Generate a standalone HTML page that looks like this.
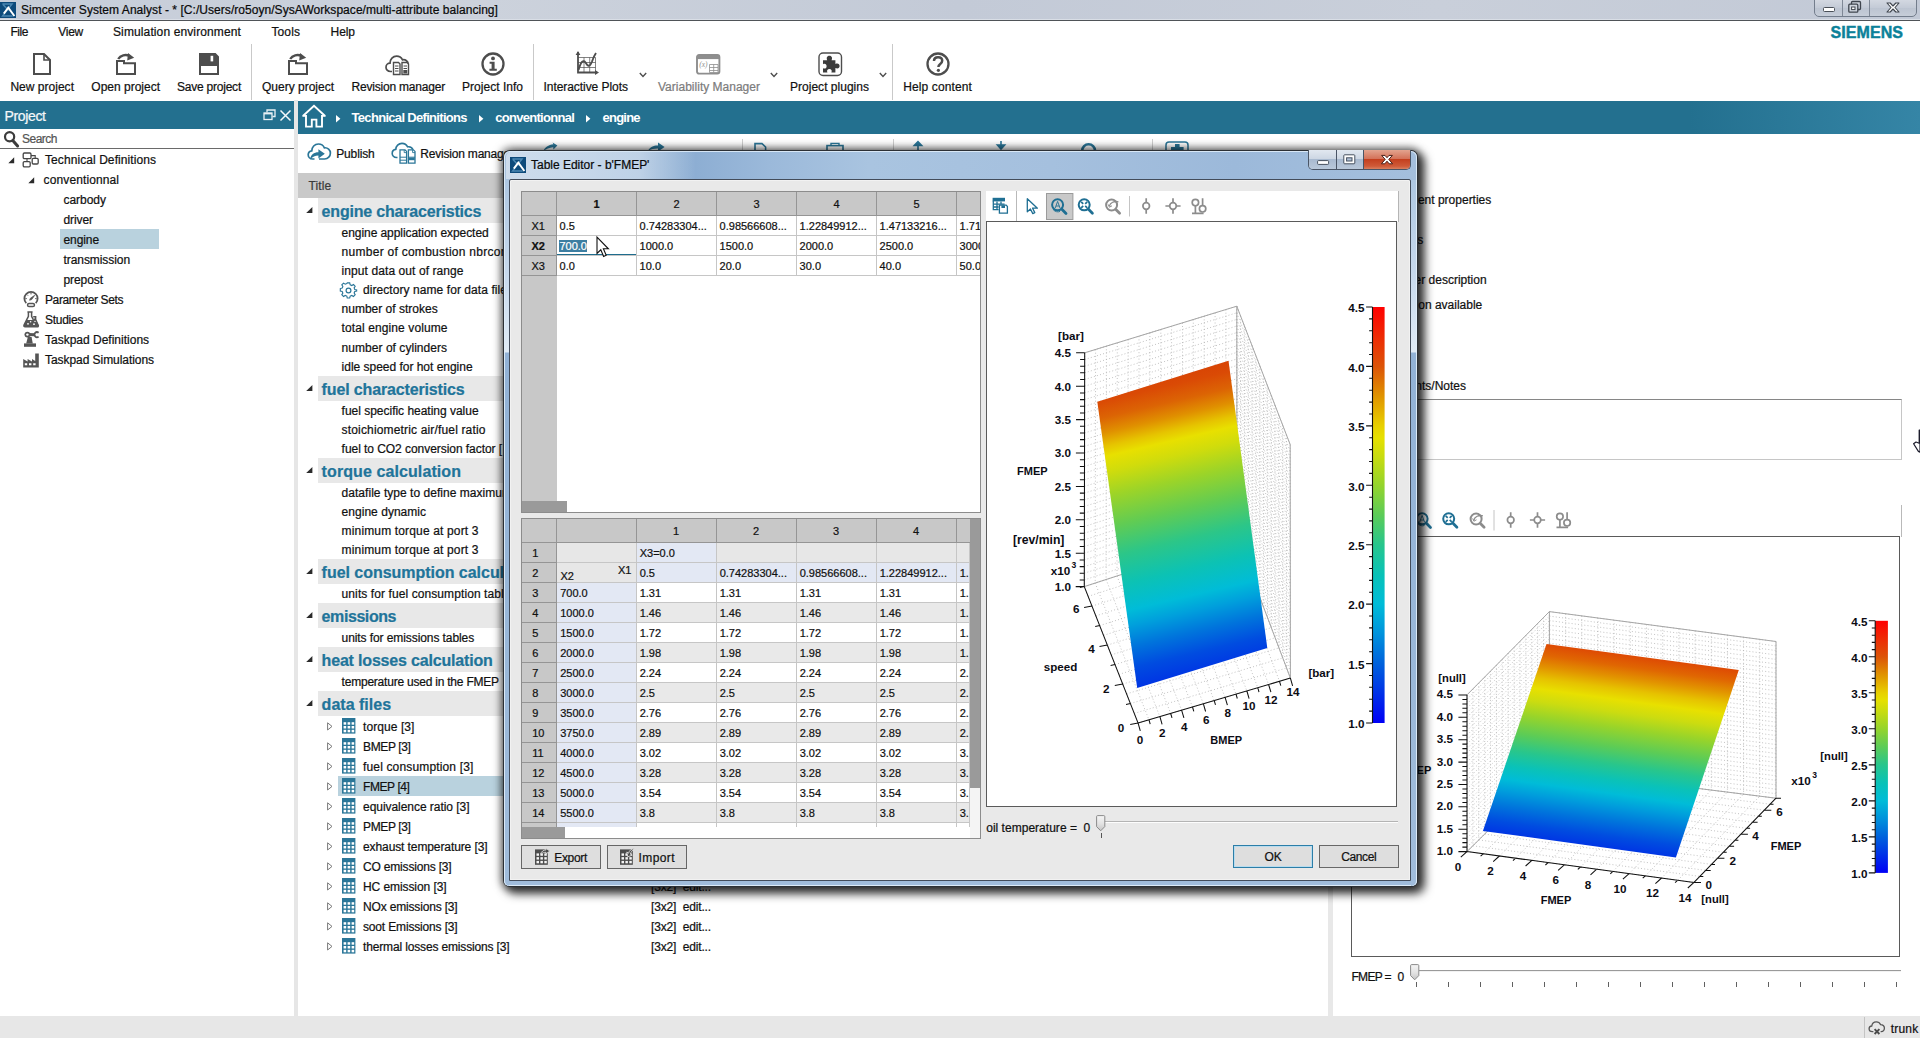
<!DOCTYPE html>
<html><head><meta charset="utf-8"><title>Simcenter System Analyst</title>
<style>
html,body{margin:0;padding:0;}
body{width:1920px;height:1038px;overflow:hidden;position:relative;background:#fff;font-family:"Liberation Sans",sans-serif;font-size:12px;color:#111;}
div{position:absolute;box-sizing:border-box;}
.t{position:absolute;white-space:pre;-webkit-text-stroke:0.22px;}
svg{position:absolute;overflow:visible;}
table{border-collapse:collapse;}
</style></head>
<body>
<div style="left:0px;top:0px;width:1920px;height:20px;background:linear-gradient(90deg,#c6cdd9 0%,#ccd2dc 25%,#c3cad7 50%,#c9cfda 75%,#c2c9d6 100%);"></div>
<div style="left:0px;top:19px;width:1920px;height:1px;background:#d9dee6;"></div>
<div style="left:0px;top:20px;width:1920px;height:1px;background:#4f5358;"></div>
<svg style="left:0px;top:2px;" width="16" height="16" viewBox="0 0 16 16"><rect x="0" y="0" width="16" height="16" fill="#0d4a7b"/><path d="M2.4 1.9H12L2.6 13.9H12.6M3 2.4L8.6 8.4" fill="none" stroke="#4a86b2" stroke-width="1.5"/><path d="M3.8 11.6L8.3 5.6L14.4 14" fill="none" stroke="#fff" stroke-width="1.9"/></svg>
<span class="t" style="top:2.32px;font-size:12px;line-height:17px;color:#0a0a0a;letter-spacing:0.048px;left:21px;">Simcenter System Analyst - * [C:/Users/ro5oyn/SysAWorkspace/multi-attribute balancing]</span>
<div style="left:1814px;top:-1px;width:103px;height:18px;border:1px solid #737d8c;border-radius:0 0 5px 5px;background:linear-gradient(#d3d8e1,#c3cad6 50%,#bcc4d1 51%,#c6cdd8);"></div>
<div style="left:1842px;top:0px;width:1px;height:16px;background:#7f8896;"></div>
<div style="left:1869px;top:0px;width:1px;height:16px;background:#7f8896;"></div>
<svg style="left:1823px;top:7px;" width="13" height="6" viewBox="0 0 13 6"><rect x="0.5" y="0.5" width="11" height="4" rx="1" fill="#fff" stroke="#4a5058" stroke-width="1"/></svg>
<svg style="left:1848px;top:1px;" width="14" height="13" viewBox="0 0 14 13"><rect x="3.5" y="0.5" width="9" height="8" rx="1" fill="none" stroke="#3f454e" stroke-width="1.3"/><rect x="0.8" y="3.2" width="9" height="8" rx="1" fill="#cfd5de" stroke="#3f454e" stroke-width="1.3"/><rect x="3.6" y="6" width="3.4" height="2.6" fill="#fff" stroke="#3f454e" stroke-width="1"/></svg>
<svg style="left:1886px;top:2px;" width="14" height="11" viewBox="0 0 14 11"><path d="M1 1H4.2L7 4L9.8 1H13L9 5.5L13 10H9.8L7 7L4.2 10H1L5 5.5Z" fill="#fff" stroke="#3f454e" stroke-width="1.1" stroke-linejoin="round"/></svg>
<div style="left:0px;top:21px;width:1920px;height:79px;background:#fff;"></div>
<span class="t" style="top:24.12px;font-size:12px;line-height:17px;color:#111;letter-spacing:-0.436px;left:10.4px;">File</span>
<span class="t" style="top:24.12px;font-size:12px;line-height:17px;color:#111;letter-spacing:-0.274px;left:58.3px;">View</span>
<span class="t" style="top:24.12px;font-size:12px;line-height:17px;color:#111;letter-spacing:0.118px;left:113px;">Simulation environment</span>
<span class="t" style="top:24.12px;font-size:12px;line-height:17px;color:#111;letter-spacing:0.097px;left:271.5px;">Tools</span>
<span class="t" style="top:24.12px;font-size:12px;line-height:17px;color:#111;letter-spacing:-0.122px;left:330.6px;">Help</span>
<span class="t" style="top:21.80px;font-size:16px;line-height:22px;color:#0b8199;font-weight:bold;letter-spacing:0.055px;left:1830.6px;-webkit-text-stroke:0.45px #0b8199;">SIEMENS</span>
<span class="t" style="top:78.92px;font-size:12px;line-height:17px;color:#111;letter-spacing:0.022px;left:10.4px;">New project</span>
<span class="t" style="top:78.92px;font-size:12px;line-height:17px;color:#111;left:91.3px;">Open project</span>
<span class="t" style="top:78.92px;font-size:12px;line-height:17px;color:#111;letter-spacing:-0.225px;left:177px;">Save project</span>
<span class="t" style="top:78.92px;font-size:12px;line-height:17px;color:#111;left:262px;">Query project</span>
<span class="t" style="top:78.92px;font-size:12px;line-height:17px;color:#111;letter-spacing:-0.201px;left:351.5px;">Revision manager</span>
<span class="t" style="top:78.92px;font-size:12px;line-height:17px;color:#111;letter-spacing:0.025px;left:462px;">Project Info</span>
<span class="t" style="top:78.92px;font-size:12px;line-height:17px;color:#111;letter-spacing:-0.057px;left:543.5px;">Interactive Plots</span>
<span class="t" style="top:78.92px;font-size:12px;line-height:17px;color:#7c7c7c;letter-spacing:0.009px;left:658px;">Variability Manager</span>
<span class="t" style="top:78.92px;font-size:12px;line-height:17px;color:#111;letter-spacing:0.019px;left:790px;">Project plugins</span>
<span class="t" style="top:78.92px;font-size:12px;line-height:17px;color:#111;letter-spacing:0.117px;left:903.2px;">Help content</span>
<div style="left:251px;top:44px;width:1px;height:56px;background:#c9c9c9;"></div>
<div style="left:533px;top:44px;width:1px;height:56px;background:#c9c9c9;"></div>
<div style="left:892px;top:44px;width:1px;height:56px;background:#c9c9c9;"></div>
<svg style="left:638.5px;top:71.5px;" width="8" height="6" viewBox="0 0 8 6"><path d="M0.8 1L4 4.4L7.2 1" fill="none" stroke="#4d4d4d" stroke-width="1.4"/></svg>
<svg style="left:770px;top:71.5px;" width="8" height="6" viewBox="0 0 8 6"><path d="M0.8 1L4 4.4L7.2 1" fill="none" stroke="#4d4d4d" stroke-width="1.4"/></svg>
<svg style="left:879px;top:71.5px;" width="8" height="6" viewBox="0 0 8 6"><path d="M0.8 1L4 4.4L7.2 1" fill="none" stroke="#4d4d4d" stroke-width="1.4"/></svg>
<svg style="left:33px;top:53px;" width="18" height="22" viewBox="0 0 18 22"><path d="M1 1H11L17 7V21H1Z" fill="none" stroke="#4d4d4d" stroke-width="2" stroke-linejoin="miter"/><path d="M11 1V7H17" fill="none" stroke="#4d4d4d" stroke-width="1.6"/></svg>
<svg style="left:116px;top:53px;" width="20" height="22" viewBox="0 0 20 22"><path d="M1 8H8V10.2H19V21H1Z" fill="none" stroke="#4d4d4d" stroke-width="2" stroke-linejoin="miter"/><path d="M2.2 6C4.5 2.2 9.5 1 13.6 3" fill="none" stroke="#4d4d4d" stroke-width="2.4"/><path d="M12 0L18.2 4.8L11.2 7.4Z" fill="#4d4d4d"/></svg>
<svg style="left:288px;top:53px;" width="20" height="22" viewBox="0 0 20 22"><path d="M1 8H8V10.2H19V21H1Z" fill="none" stroke="#4d4d4d" stroke-width="2" stroke-linejoin="miter"/><path d="M2.2 6C4.5 2.2 9.5 1 13.6 3" fill="none" stroke="#4d4d4d" stroke-width="2.4"/><path d="M12 0L18.2 4.8L11.2 7.4Z" fill="#4d4d4d"/></svg>
<svg style="left:199px;top:53px;" width="21" height="22" viewBox="0 0 21 22"><path d="M1 1H16.2L19 3.8V21H1Z" fill="#fff" stroke="#4d4d4d" stroke-width="2" stroke-linejoin="miter"/><path d="M1 1H16.2L19 3.8V13H1Z" fill="#4d4d4d"/><rect x="11.6" y="2.8" width="2.6" height="5.6" fill="#fff"/></svg>
<svg style="left:385px;top:53px;" width="26" height="23" viewBox="0 0 26 23"><path d="M7 18.5H5.5C2.5 18.5 1 16.3 1 14.2C1 11.8 2.8 10.2 5 10.2C5 6 8 3.2 11.6 3.2C14.3 3.2 16.4 4.6 17.5 6.8C20.5 6.3 23.2 8.3 23.2 11.2" fill="none" stroke="#4d4d4d" stroke-width="1.7"/><path d="M8.5 9.5H13.5L15 11V21.5H8.5Z" fill="#fff" stroke="#4d4d4d" stroke-width="1.4"/><path d="M17 9.5H22L23.5 11V21.5H17Z" fill="#fff" stroke="#4d4d4d" stroke-width="1.4"/><path d="M10 13H13.5M10 15.5H13.5M10 18H13.5M18.5 13H22M18.5 15.5H22" stroke="#4d4d4d" stroke-width="1"/><rect x="18.3" y="17" width="4" height="3.5" fill="#4d4d4d"/></svg>
<svg style="left:481px;top:52px;" width="24" height="24" viewBox="0 0 24 24"><circle cx="12" cy="12" r="10.5" fill="none" stroke="#4d4d4d" stroke-width="2.3"/><circle cx="12" cy="6.4" r="1.9" fill="#4d4d4d"/><path d="M8.6 9.8H13.6V16.8H15.8V18.8H8.4V16.8H10.6V11.8H8.6Z" fill="#4d4d4d"/></svg>
<svg style="left:574px;top:51px;" width="26" height="25" viewBox="0 0 26 25"><path d="M4 1V21.5H23" fill="none" stroke="#4d4d4d" stroke-width="1.8"/><path d="M4 0L1.6 4H6.4ZM25 21.5L21 19.1V23.9Z" fill="#4d4d4d"/><path d="M4 6.5H21.5V21.5M4 11.5H21.5M4 16.5H21.5M10 6.5V21.5M15.7 6.5V21.5" fill="none" stroke="#4d4d4d" stroke-width="0.7"/><path d="M4.5 19C7 10 9.5 8.5 11.5 11.5C13.5 15 15.5 17 18 10.5C19.2 7 20.6 4 22 2" fill="none" stroke="#4d4d4d" stroke-width="1.9"/></svg>
<svg style="left:696.4px;top:54px;" width="26" height="22" viewBox="0 0 26 22"><rect x="1" y="1" width="22.4" height="18.6" rx="2" fill="none" stroke="#8e8e8e" stroke-width="1.9"/><path d="M1 3.4H23.4" stroke="#8e8e8e" stroke-width="3.4"/><path d="M13.5 10.5H22M13.5 13.5H22M13.5 16.5H22M13.5 10.5V18.5M17.7 10.5V18.5M22 10.5V18.5M13.5 18.5H22" stroke="#8e8e8e" stroke-width="0.8" fill="none"/><text x="3.2" y="12.5" font-family="Liberation Serif" font-style="italic" font-size="7.5" fill="#8e8e8e">(x)</text></svg>
<svg style="left:818px;top:52px;" width="25" height="25" viewBox="0 0 25 25"><rect x="1" y="1" width="22.5" height="22.5" rx="4" fill="#fff" stroke="#4d4d4d" stroke-width="1.4"/><path d="M5 8.2H9.2C8 5.6 9.4 3.8 11.4 3.8C13.4 3.8 14.8 5.6 13.6 8.2H17.4V12C20 10.8 21.6 12.2 21.6 14C21.6 15.8 20 17.2 17.4 16V20.6H13.4C14.4 18.4 13.2 17 11.4 17C9.6 17 8.4 18.4 9.4 20.6H5V16.2C7.2 17.2 8.6 16 8.6 14.2C8.6 12.4 7.2 11.2 5 12.2Z" fill="#3c3c3c"/></svg>
<svg style="left:926px;top:52px;" width="24" height="24" viewBox="0 0 24 24"><circle cx="12" cy="12" r="10.5" fill="none" stroke="#4d4d4d" stroke-width="2.3"/><path d="M8 9C8 6.6 9.7 5.2 12.1 5.2C14.5 5.2 16.2 6.6 16.2 8.7C16.2 10.4 15.2 11.3 14 12.2C13 13 12.4 13.5 12.4 15" fill="none" stroke="#4d4d4d" stroke-width="2.5"/><circle cx="12.4" cy="18.3" r="1.6" fill="#4d4d4d"/></svg>
<div style="left:0px;top:100.7px;width:1920px;height:28.1px;background:linear-gradient(90deg,#23708f 0%,#23708f 88%,#3585a6 100%);"></div>
<div style="left:298px;top:129px;width:1622px;height:5px;background:linear-gradient(90deg,#23708f 0%,#23708f 86%,#3585a6 100%);"></div>
<span class="t" style="top:106.41px;font-size:14px;line-height:20px;color:#f4f8fa;letter-spacing:-0.368px;left:4.6px;">Project</span>
<svg style="left:263px;top:109px;" width="13" height="12" viewBox="0 0 13 12"><path d="M4 3.5V1H12V7.5H9.5" fill="none" stroke="#e8f0f4" stroke-width="1.3"/><rect x="1" y="4" width="8" height="6.5" fill="none" stroke="#e8f0f4" stroke-width="1.3"/><path d="M1 4.6H9" stroke="#e8f0f4" stroke-width="1.6"/></svg>
<svg style="left:279px;top:109px;" width="13" height="13" viewBox="0 0 13 13"><path d="M1.5 1.5L11.5 11.5M11.5 1.5L1.5 11.5" stroke="#f4f8fa" stroke-width="1.5"/></svg>
<svg style="left:301px;top:104px;" width="28" height="26" viewBox="0 0 28 26"><path d="M2.2 11.8L13 1.9L23.8 11.8" fill="none" stroke="#fff" stroke-width="1.9" stroke-linejoin="miter"/><path d="M1.4 11.9H5V22.6H10.8V15.6H15.4V22.6H21V11.9H24.6" fill="none" stroke="#fff" stroke-width="1.9" stroke-linejoin="miter"/></svg>
<svg style="left:335.8px;top:114.6px;" width="5" height="8" viewBox="0 0 5 8"><path d="M0 0L4.4 3.7L0 7.4Z" fill="#fff"/></svg>
<svg style="left:478.6px;top:114.6px;" width="5" height="8" viewBox="0 0 5 8"><path d="M0 0L4.4 3.7L0 7.4Z" fill="#fff"/></svg>
<svg style="left:585.8px;top:114.6px;" width="5" height="8" viewBox="0 0 5 8"><path d="M0 0L4.4 3.7L0 7.4Z" fill="#fff"/></svg>
<span class="t" style="top:109.42px;font-size:13px;line-height:18px;color:#fff;font-weight:bold;letter-spacing:-0.685px;left:351.5px;-webkit-text-stroke:0;">Technical Definitions</span>
<span class="t" style="top:109.42px;font-size:13px;line-height:18px;color:#fff;font-weight:bold;letter-spacing:-0.702px;left:495.2px;-webkit-text-stroke:0;">conventionnal</span>
<span class="t" style="top:109.42px;font-size:13px;line-height:18px;color:#fff;font-weight:bold;letter-spacing:-0.768px;left:602.5px;-webkit-text-stroke:0;">engine</span>
<div style="left:0px;top:1016px;width:1920px;height:22px;background:#e7e7e7;"></div>
<div style="left:1864px;top:1017px;width:1px;height:21px;background:#c4c4c4;"></div>
<svg style="left:1868.4px;top:1020.6px;" width="18" height="15" viewBox="0 0 18 15"><path d="M5.4 10.6H4.4C2.5 10.6 1.1 9.3 1.1 7.7C1.1 6.2 2.3 5.1 3.8 5C4 2.7 5.9 0.9 8.3 0.9C10.2 0.9 11.8 2 12.5 3.6C14.7 3.5 16.4 5.1 16.4 7.1C16.4 9 15 10.6 13.1 10.6H12.6" fill="none" stroke="#555" stroke-width="1.3"/><path d="M6.6 8.2L11.4 13M11.4 8.2L6.6 13" stroke="#4a4a4a" stroke-width="1.9"/></svg>
<span class="t" style="top:1021.02px;font-size:12px;line-height:17px;color:#111;letter-spacing:0.183px;left:1890.8px;">trunk</span>
<div style="left:294px;top:100px;width:4px;height:916px;background:#e6e6e6;"></div>
<div style="left:1328px;top:173px;width:5px;height:843px;background:#e8e8e8;"></div>
<svg style="left:3px;top:130px;" width="17" height="18" viewBox="0 0 17 18"><circle cx="6.6" cy="6.8" r="4.6" fill="none" stroke="#3c3c3c" stroke-width="2.2"/><path d="M9.8 10.4L14.6 16" stroke="#3c3c3c" stroke-width="3" stroke-linecap="round"/></svg>
<span class="t" style="top:131.12px;font-size:12px;line-height:17px;color:#555;letter-spacing:-0.505px;left:22px;">Search</span>
<div style="left:0px;top:148px;width:294px;height:1px;background:#6a6a6a;"></div>
<div style="left:60px;top:229px;width:99px;height:20px;background:#b9d2de;"></div>
<span class="t" style="top:152.02px;font-size:12px;line-height:17px;color:#111;letter-spacing:0.077px;left:45px;">Technical Definitions</span>
<span class="t" style="top:172.02px;font-size:12px;line-height:17px;color:#111;letter-spacing:0.111px;left:43.6px;">conventionnal</span>
<span class="t" style="top:192.02px;font-size:12px;line-height:17px;color:#111;letter-spacing:-0.029px;left:63.5px;">carbody</span>
<span class="t" style="top:212.02px;font-size:12px;line-height:17px;color:#111;letter-spacing:-0.086px;left:63.5px;">driver</span>
<span class="t" style="top:232.02px;font-size:12px;line-height:17px;color:#111;letter-spacing:-0.091px;left:63.5px;">engine</span>
<span class="t" style="top:252.02px;font-size:12px;line-height:17px;color:#111;letter-spacing:-0.072px;left:63.5px;">transmission</span>
<span class="t" style="top:272.02px;font-size:12px;line-height:17px;color:#111;letter-spacing:-0.076px;left:63.5px;">prepost</span>
<span class="t" style="top:292.02px;font-size:12px;line-height:17px;color:#111;letter-spacing:-0.384px;left:45px;">Parameter Sets</span>
<span class="t" style="top:312.02px;font-size:12px;line-height:17px;color:#111;letter-spacing:-0.290px;left:45px;">Studies</span>
<span class="t" style="top:332.02px;font-size:12px;line-height:17px;color:#111;left:45px;">Taskpad Definitions</span>
<span class="t" style="top:352.02px;font-size:12px;line-height:17px;color:#111;letter-spacing:-0.056px;left:45px;">Taskpad Simulations</span>
<svg style="left:8px;top:156.5px;" width="7" height="7" viewBox="0 0 7 7"><path d="M6.2 0.3V6.2H0.3Z" fill="#2b2b2b"/></svg>
<svg style="left:28px;top:176.5px;" width="7" height="7" viewBox="0 0 7 7"><path d="M6.2 0.3V6.2H0.3Z" fill="#2b2b2b"/></svg>
<svg style="left:22px;top:151.6px;" width="17" height="16" viewBox="0 0 17 16"><rect x="1.2" y="1" width="7.8" height="5.6" rx="1.2" fill="#fff" stroke="#454545" stroke-width="1.3"/><rect x="10.2" y="6.4" width="6" height="5.6" rx="1.2" fill="#fff" stroke="#454545" stroke-width="1.3"/><rect x="1.2" y="9.6" width="7" height="5.2" rx="1.2" fill="#fff" stroke="#454545" stroke-width="1.3"/><path d="M5 6.6V9.6M9 3.6H13.2V6.4" fill="none" stroke="#454545" stroke-width="1.1"/></svg>
<svg style="left:23px;top:290.6px;" width="16" height="17" viewBox="0 0 16 17"><path d="M3.3 12.2A6.6 6.6 0 1 1 12.7 12.2" fill="none" stroke="#555" stroke-width="1.8"/><path d="M6.6 9.2L7.4 7.2L11.6 4.4L8.6 8.6Z" fill="#555" stroke="#555" stroke-width="0.8" stroke-linejoin="round"/><path d="M8 1.8V3.4M2.4 7.6H3.8M12.2 7.6H13.6M4 3.6L5 4.6" stroke="#555" stroke-width="1"/><rect x="4.6" y="12.4" width="6.8" height="3.2" rx="1.4" fill="#fff" stroke="#555" stroke-width="1.5"/></svg>
<svg style="left:23px;top:310.6px;" width="16" height="17" viewBox="0 0 16 17"><path d="M4.4 0.9H9.6M5.4 0.9V5.4L1 14.2C0.6 15.1 1.2 15.8 2 15.8H14.2C15.2 15.8 15.6 15 15.2 14.2L12.6 8.6V5.8M10.2 5.8H13.4M8.6 0.9V5.4L10.4 9" fill="none" stroke="#555" stroke-width="1.5" stroke-linejoin="round"/><path d="M3.6 9H10.6V7.6H12.6L15.4 14.6L14.6 15.8H1.6L0.8 14.6Z" fill="#555"/><circle cx="5" cy="12.8" r="0.9" fill="#fff"/><circle cx="7.6" cy="10.8" r="0.8" fill="#fff"/><circle cx="11" cy="13.2" r="0.9" fill="#fff"/><circle cx="12" cy="10.4" r="0.7" fill="#fff"/></svg>
<svg style="left:23px;top:331px;" width="17" height="17" viewBox="0 0 17 17"><rect x="1" y="12.4" width="12" height="3.4" fill="#555"/><path d="M3.2 12.6L5 5.2L8.6 6L9.8 12.6Z" fill="#555"/><path d="M5 3.4L11.4 3.8" stroke="#555" stroke-width="3"/><circle cx="4.4" cy="3.6" r="2.9" fill="#555"/><circle cx="4.4" cy="3.6" r="1.2" fill="#fff"/><path d="M15.6 1.8A2.5 2.5 0 1 0 15.6 5.6" fill="none" stroke="#555" stroke-width="1.8"/></svg>
<svg style="left:23px;top:352.6px;" width="17" height="15" viewBox="0 0 17 15"><path d="M0.2 14.4V6L4.6 8.6V6L9 8.6V6L12.2 8V0.4H15.8V14.4Z" fill="#555"/><path d="M1.8 11.3H4.2M6 11.3H8.4M10.2 11.3H12.6" stroke="#fff" stroke-width="1.9"/></svg>
<svg style="left:307px;top:142px;" width="26" height="21" viewBox="0 0 26 21"><path d="M7.5 17H5.6C3 17 1.2 15 1.2 12.8C1.2 10.6 2.8 9 4.8 8.8C4.8 5 7.6 2 11.4 2C14.2 2 16.4 3.6 17.4 5.8C20.6 5.4 23.4 7.8 23.4 11C23.4 14.2 21 17 17.6 17H12" fill="none" stroke="#2a7698" stroke-width="1.7"/><path d="M3.2 17.5C3.6 12.6 7 10.2 11.4 10.2V7.2L17.8 11.8L11.4 16.4V13.4C8.2 13.4 5.4 14.4 3.2 17.5Z" fill="#2a7698"/></svg>
<span class="t" style="top:145.52px;font-size:12px;line-height:17px;color:#111;letter-spacing:-0.137px;left:336.2px;">Publish</span>
<svg style="left:391px;top:142px;" width="26" height="23" viewBox="0 0 26 23"><path d="M6.5 15.5H5.5C2.8 15.5 1.2 13.4 1.2 11.4C1.2 9.2 2.8 7.6 4.8 7.4C4.8 4 7.6 1.4 11 1.4C13.6 1.4 15.6 2.8 16.6 4.8C19 4.4 21.2 5.6 22 7.8" fill="none" stroke="#2a7698" stroke-width="1.6"/><path d="M9 7.8H14L15.6 9.4V21.2H9Z" fill="#fff" stroke="#2a7698" stroke-width="1.3"/><path d="M17.4 7.8H22.4L24 9.4V21.2H17.4Z" fill="#fff" stroke="#2a7698" stroke-width="1.3"/><path d="M9 15.2H15.6M9 18.2H15.6M17.4 15.2H24" stroke="#2a7698" stroke-width="1"/><rect x="17.6" y="15.6" width="6.2" height="2.6" fill="#2a7698"/><path d="M13.2 8V10.6H15.6M21.6 8V10.6H24" stroke="#2a7698" stroke-width="0.9" fill="none"/></svg>
<span class="t" style="top:145.52px;font-size:12px;line-height:17px;color:#111;letter-spacing:-0.201px;left:420.3px;">Revision manager</span>
<svg style="left:540px;top:142px;" width="18" height="10" viewBox="0 0 18 10"><path d="M3 9.6C4.6 5.4 8.6 2.6 13.4 2.2L12.6 0.4L17.4 3.4L13.4 7.4L13.2 5.2C9.4 5.4 6 6.8 3 9.6Z" fill="#2a7698"/></svg>
<svg style="left:645px;top:142px;" width="22" height="10" viewBox="0 0 22 10"><path d="M3 9C5 5 9 3.4 13 3.6V0.6L19.6 5L13 9.4V6.6C9 6.6 6 7.4 3 9Z" fill="#2a7698"/></svg>
<svg style="left:754px;top:142px;" width="16" height="10" viewBox="0 0 16 10"><path d="M1 12V1.6H8L11.6 5V12" fill="none" stroke="#2a7698" stroke-width="1.6"/></svg>
<svg style="left:826px;top:142px;" width="18" height="10" viewBox="0 0 18 10"><rect x="1" y="3.6" width="16" height="8" fill="none" stroke="#2a7698" stroke-width="1.6"/><path d="M5 3.6V1.4H13V3.6" fill="none" stroke="#2a7698" stroke-width="1.4"/></svg>
<svg style="left:912px;top:140px;" width="12" height="10" viewBox="0 0 12 10"><path d="M6 10V3M2.4 5.4L6 1.6L9.6 5.4Z" stroke="#2a7698" stroke-width="1.6" fill="#2a7698"/></svg>
<svg style="left:995px;top:140px;" width="12" height="10" viewBox="0 0 12 10"><path d="M6 1V7M2.4 5L6 9L9.6 5Z" stroke="#2a7698" stroke-width="1.6" fill="#2a7698"/></svg>
<svg style="left:1079px;top:142px;" width="20" height="10" viewBox="0 0 20 10"><circle cx="9.6" cy="8.6" r="6.4" fill="none" stroke="#2a7698" stroke-width="2.6"/></svg>
<svg style="left:1165px;top:141px;" width="26" height="10" viewBox="0 0 26 10"><rect x="1" y="1" width="22" height="14" rx="3" fill="none" stroke="#2a7698" stroke-width="1.5"/><rect x="10" y="3" width="4.6" height="3" fill="#2a7698"/><rect x="6" y="6" width="12.6" height="4" fill="#2a7698"/></svg>
<div style="left:742px;top:139px;width:1px;height:14px;background:#cfcfcf;"></div>
<div style="left:893px;top:139px;width:1px;height:14px;background:#cfcfcf;"></div>
<div style="left:1152px;top:139px;width:1px;height:14px;background:#cfcfcf;"></div>
<div style="left:298px;top:173px;width:1030px;height:25px;background:#c9c9c9;"></div>
<span class="t" style="top:177.92px;font-size:12px;line-height:17px;color:#3a3a3a;letter-spacing:0.113px;left:308.6px;">Title</span>
<div style="left:318px;top:198px;width:1010px;height:24.7px;background:#e8e8e8;"></div>
<svg style="left:306px;top:207px;" width="7" height="7" viewBox="0 0 7 7"><path d="M6.4 0V6.1H0.2Z" fill="#2b2b2b"/></svg>
<span class="t" style="top:200.90px;font-size:16px;line-height:22px;color:#21749a;font-weight:bold;letter-spacing:-0.192px;left:321.6px;">engine characeristics</span>
<span class="t" style="top:224.64px;font-size:12px;line-height:17px;color:#111;letter-spacing:-0.066px;left:341.6px;">engine application expected</span>
<span class="t" style="top:243.79px;font-size:12px;line-height:17px;color:#111;letter-spacing:0.27px;left:341.6px;">number of combustion nbrcomb</span>
<span class="t" style="top:262.94px;font-size:12px;line-height:17px;color:#111;letter-spacing:0.083px;left:341.6px;">input data out of range</span>
<svg style="left:340px;top:281.85px;" width="18" height="18" viewBox="0 0 18 18"><g fill="none" stroke="#2a7698" stroke-width="1.2"><circle cx="8.5" cy="8.5" r="2.4"/><path d="M7.2 1.2H9.8L10.3 3.2L12 4L13.8 2.9L15.6 4.7L14.5 6.5L15.2 8.2L17.2 8.7V9.8L15.2 10.4L14.5 12L15.6 13.8L13.8 15.6L12 14.5L10.3 15.2L9.8 17.2H7.2L6.7 15.2L5 14.5L3.2 15.6L1.4 13.8L2.5 12L1.8 10.3L-0.2 9.8V7.2L1.8 6.7L2.5 5L1.4 3.2L3.2 1.4L5 2.5L6.7 1.8Z" transform="translate(0.5,-0.2) scale(0.94)"/></g></svg>
<span class="t" style="top:282.09px;font-size:12px;line-height:17px;color:#111;letter-spacing:0.07px;left:363px;">directory name for data files</span>
<span class="t" style="top:301.24px;font-size:12px;line-height:17px;color:#111;left:341.6px;">number of strokes</span>
<span class="t" style="top:320.39px;font-size:12px;line-height:17px;color:#111;letter-spacing:0.101px;left:341.6px;">total engine volume</span>
<span class="t" style="top:339.54px;font-size:12px;line-height:17px;color:#111;letter-spacing:0.041px;left:341.6px;">number of cylinders</span>
<span class="t" style="top:358.69px;font-size:12px;line-height:17px;color:#111;letter-spacing:-0.018px;left:341.6px;">idle speed for hot engine</span>
<div style="left:318px;top:376.2px;width:1010px;height:24.7px;background:#e8e8e8;"></div>
<svg style="left:306px;top:385.2px;" width="7" height="7" viewBox="0 0 7 7"><path d="M6.4 0V6.1H0.2Z" fill="#2b2b2b"/></svg>
<span class="t" style="top:379.10px;font-size:16px;line-height:22px;color:#21749a;font-weight:bold;letter-spacing:-0.143px;left:321.6px;">fuel characteristics</span>
<span class="t" style="top:402.84px;font-size:12px;line-height:17px;color:#111;letter-spacing:-0.016px;left:341.6px;">fuel specific heating value</span>
<span class="t" style="top:421.99px;font-size:12px;line-height:17px;color:#111;letter-spacing:0.159px;left:341.6px;">stoichiometric air/fuel ratio</span>
<span class="t" style="top:441.14px;font-size:12px;line-height:17px;color:#111;letter-spacing:-0.05px;left:341.6px;">fuel to CO2 conversion factor [</span>
<div style="left:318px;top:458.3px;width:1010px;height:24.7px;background:#e8e8e8;"></div>
<svg style="left:306px;top:467.3px;" width="7" height="7" viewBox="0 0 7 7"><path d="M6.4 0V6.1H0.2Z" fill="#2b2b2b"/></svg>
<span class="t" style="top:461.20px;font-size:16px;line-height:22px;color:#21749a;font-weight:bold;letter-spacing:0.095px;left:321.6px;">torque calculation</span>
<span class="t" style="top:484.94px;font-size:12px;line-height:17px;color:#111;letter-spacing:0.03px;left:341.6px;">datafile type to define maximum</span>
<span class="t" style="top:504.09px;font-size:12px;line-height:17px;color:#111;letter-spacing:0.031px;left:341.6px;">engine dynamic</span>
<span class="t" style="top:523.24px;font-size:12px;line-height:17px;color:#111;letter-spacing:0.150px;left:341.6px;">minimum torque at port 3</span>
<span class="t" style="top:542.39px;font-size:12px;line-height:17px;color:#111;letter-spacing:0.150px;left:341.6px;">minimum torque at port 3</span>
<div style="left:318px;top:559.3px;width:1010px;height:24.7px;background:#e8e8e8;"></div>
<svg style="left:306px;top:568.3px;" width="7" height="7" viewBox="0 0 7 7"><path d="M6.4 0V6.1H0.2Z" fill="#2b2b2b"/></svg>
<span class="t" style="top:562.20px;font-size:16px;line-height:22px;color:#21749a;font-weight:bold;letter-spacing:-0.03px;left:321.6px;">fuel consumption calculation</span>
<span class="t" style="top:585.94px;font-size:12px;line-height:17px;color:#111;letter-spacing:0.09px;left:341.6px;">units for fuel consumption tables</span>
<div style="left:318px;top:603px;width:1010px;height:24.7px;background:#e8e8e8;"></div>
<svg style="left:306px;top:612px;" width="7" height="7" viewBox="0 0 7 7"><path d="M6.4 0V6.1H0.2Z" fill="#2b2b2b"/></svg>
<span class="t" style="top:605.90px;font-size:16px;line-height:22px;color:#21749a;font-weight:bold;letter-spacing:-0.418px;left:321.6px;">emissions</span>
<span class="t" style="top:629.64px;font-size:12px;line-height:17px;color:#111;letter-spacing:-0.086px;left:341.6px;">units for emissions tables</span>
<div style="left:318px;top:646.9px;width:1010px;height:24.7px;background:#e8e8e8;"></div>
<svg style="left:306px;top:655.9px;" width="7" height="7" viewBox="0 0 7 7"><path d="M6.4 0V6.1H0.2Z" fill="#2b2b2b"/></svg>
<span class="t" style="top:649.80px;font-size:16px;line-height:22px;color:#21749a;font-weight:bold;letter-spacing:-0.182px;left:321.6px;">heat losses calculation</span>
<span class="t" style="top:673.54px;font-size:12px;line-height:17px;color:#111;letter-spacing:-0.22px;left:341.6px;">temperature used in the FMEP</span>
<div style="left:318px;top:691.2px;width:1010px;height:24.7px;background:#e8e8e8;"></div>
<svg style="left:306px;top:700.2px;" width="7" height="7" viewBox="0 0 7 7"><path d="M6.4 0V6.1H0.2Z" fill="#2b2b2b"/></svg>
<span class="t" style="top:694.10px;font-size:16px;line-height:22px;color:#21749a;font-weight:bold;letter-spacing:0.014px;left:321.6px;">data files</span>
<div style="left:338px;top:776px;width:990px;height:20px;background:#b9d2de;"></div>
<svg style="left:326.6px;top:722.4px;" width="6" height="9" viewBox="0 0 6 9"><path d="M0.6 0.8L5 4.4L0.6 8Z" fill="#fff" stroke="#7a7a7a" stroke-width="1"/></svg>
<svg style="left:342px;top:718.2px;" width="14" height="16" viewBox="0 0 14 16"><rect x="0" y="0" width="13.4" height="15.6" fill="#2a7698"/><rect x="1.6" y="4.2" width="2.6" height="2.5" fill="#fff"/><rect x="5.6" y="4.2" width="2.6" height="2.5" fill="#fff"/><rect x="9.6" y="4.2" width="2.6" height="2.5" fill="#fff"/><rect x="1.6" y="8.0" width="2.6" height="2.5" fill="#fff"/><rect x="5.6" y="8.0" width="2.6" height="2.5" fill="#fff"/><rect x="9.6" y="8.0" width="2.6" height="2.5" fill="#fff"/><rect x="1.6" y="11.8" width="2.6" height="2.5" fill="#fff"/><rect x="5.6" y="11.8" width="2.6" height="2.5" fill="#fff"/><rect x="9.6" y="11.8" width="2.6" height="2.5" fill="#fff"/></svg>
<span class="t" style="top:718.94px;font-size:12px;line-height:17px;color:#111;letter-spacing:0.080px;left:363px;">torque [3]</span>
<span class="t" style="top:718.94px;font-size:12px;line-height:17px;color:#111;letter-spacing:-0.146px;left:651px;">[3x2]  edit...</span>
<svg style="left:326.6px;top:742.4px;" width="6" height="9" viewBox="0 0 6 9"><path d="M0.6 0.8L5 4.4L0.6 8Z" fill="#fff" stroke="#7a7a7a" stroke-width="1"/></svg>
<svg style="left:342px;top:738.2px;" width="14" height="16" viewBox="0 0 14 16"><rect x="0" y="0" width="13.4" height="15.6" fill="#2a7698"/><rect x="1.6" y="4.2" width="2.6" height="2.5" fill="#fff"/><rect x="5.6" y="4.2" width="2.6" height="2.5" fill="#fff"/><rect x="9.6" y="4.2" width="2.6" height="2.5" fill="#fff"/><rect x="1.6" y="8.0" width="2.6" height="2.5" fill="#fff"/><rect x="5.6" y="8.0" width="2.6" height="2.5" fill="#fff"/><rect x="9.6" y="8.0" width="2.6" height="2.5" fill="#fff"/><rect x="1.6" y="11.8" width="2.6" height="2.5" fill="#fff"/><rect x="5.6" y="11.8" width="2.6" height="2.5" fill="#fff"/><rect x="9.6" y="11.8" width="2.6" height="2.5" fill="#fff"/></svg>
<span class="t" style="top:738.94px;font-size:12px;line-height:17px;color:#111;letter-spacing:-0.371px;left:363px;">BMEP [3]</span>
<span class="t" style="top:738.94px;font-size:12px;line-height:17px;color:#111;letter-spacing:-0.146px;left:651px;">[3x2]  edit...</span>
<svg style="left:326.6px;top:762.4px;" width="6" height="9" viewBox="0 0 6 9"><path d="M0.6 0.8L5 4.4L0.6 8Z" fill="#fff" stroke="#7a7a7a" stroke-width="1"/></svg>
<svg style="left:342px;top:758.2px;" width="14" height="16" viewBox="0 0 14 16"><rect x="0" y="0" width="13.4" height="15.6" fill="#2a7698"/><rect x="1.6" y="4.2" width="2.6" height="2.5" fill="#fff"/><rect x="5.6" y="4.2" width="2.6" height="2.5" fill="#fff"/><rect x="9.6" y="4.2" width="2.6" height="2.5" fill="#fff"/><rect x="1.6" y="8.0" width="2.6" height="2.5" fill="#fff"/><rect x="5.6" y="8.0" width="2.6" height="2.5" fill="#fff"/><rect x="9.6" y="8.0" width="2.6" height="2.5" fill="#fff"/><rect x="1.6" y="11.8" width="2.6" height="2.5" fill="#fff"/><rect x="5.6" y="11.8" width="2.6" height="2.5" fill="#fff"/><rect x="9.6" y="11.8" width="2.6" height="2.5" fill="#fff"/></svg>
<span class="t" style="top:758.94px;font-size:12px;line-height:17px;color:#111;letter-spacing:0.155px;left:363px;">fuel consumption [3]</span>
<span class="t" style="top:758.94px;font-size:12px;line-height:17px;color:#111;letter-spacing:-0.146px;left:651px;">[3x2]  edit...</span>
<svg style="left:326.6px;top:782.4px;" width="6" height="9" viewBox="0 0 6 9"><path d="M0.6 0.8L5 4.4L0.6 8Z" fill="#fff" stroke="#7a7a7a" stroke-width="1"/></svg>
<svg style="left:342px;top:778.2px;" width="14" height="16" viewBox="0 0 14 16"><rect x="0" y="0" width="13.4" height="15.6" fill="#2a7698"/><rect x="1.6" y="4.2" width="2.6" height="2.5" fill="#fff"/><rect x="5.6" y="4.2" width="2.6" height="2.5" fill="#fff"/><rect x="9.6" y="4.2" width="2.6" height="2.5" fill="#fff"/><rect x="1.6" y="8.0" width="2.6" height="2.5" fill="#fff"/><rect x="5.6" y="8.0" width="2.6" height="2.5" fill="#fff"/><rect x="9.6" y="8.0" width="2.6" height="2.5" fill="#fff"/><rect x="1.6" y="11.8" width="2.6" height="2.5" fill="#fff"/><rect x="5.6" y="11.8" width="2.6" height="2.5" fill="#fff"/><rect x="9.6" y="11.8" width="2.6" height="2.5" fill="#fff"/></svg>
<span class="t" style="top:778.94px;font-size:12px;line-height:17px;color:#111;letter-spacing:-0.412px;left:363px;">FMEP [4]</span>
<span class="t" style="top:778.94px;font-size:12px;line-height:17px;color:#111;letter-spacing:-0.146px;left:651px;">[3x2]  edit...</span>
<svg style="left:326.6px;top:802.4px;" width="6" height="9" viewBox="0 0 6 9"><path d="M0.6 0.8L5 4.4L0.6 8Z" fill="#fff" stroke="#7a7a7a" stroke-width="1"/></svg>
<svg style="left:342px;top:798.2px;" width="14" height="16" viewBox="0 0 14 16"><rect x="0" y="0" width="13.4" height="15.6" fill="#2a7698"/><rect x="1.6" y="4.2" width="2.6" height="2.5" fill="#fff"/><rect x="5.6" y="4.2" width="2.6" height="2.5" fill="#fff"/><rect x="9.6" y="4.2" width="2.6" height="2.5" fill="#fff"/><rect x="1.6" y="8.0" width="2.6" height="2.5" fill="#fff"/><rect x="5.6" y="8.0" width="2.6" height="2.5" fill="#fff"/><rect x="9.6" y="8.0" width="2.6" height="2.5" fill="#fff"/><rect x="1.6" y="11.8" width="2.6" height="2.5" fill="#fff"/><rect x="5.6" y="11.8" width="2.6" height="2.5" fill="#fff"/><rect x="9.6" y="11.8" width="2.6" height="2.5" fill="#fff"/></svg>
<span class="t" style="top:798.94px;font-size:12px;line-height:17px;color:#111;letter-spacing:-0.043px;left:363px;">equivalence ratio [3]</span>
<span class="t" style="top:798.94px;font-size:12px;line-height:17px;color:#111;letter-spacing:-0.146px;left:651px;">[3x2]  edit...</span>
<svg style="left:326.6px;top:822.4px;" width="6" height="9" viewBox="0 0 6 9"><path d="M0.6 0.8L5 4.4L0.6 8Z" fill="#fff" stroke="#7a7a7a" stroke-width="1"/></svg>
<svg style="left:342px;top:818.2px;" width="14" height="16" viewBox="0 0 14 16"><rect x="0" y="0" width="13.4" height="15.6" fill="#2a7698"/><rect x="1.6" y="4.2" width="2.6" height="2.5" fill="#fff"/><rect x="5.6" y="4.2" width="2.6" height="2.5" fill="#fff"/><rect x="9.6" y="4.2" width="2.6" height="2.5" fill="#fff"/><rect x="1.6" y="8.0" width="2.6" height="2.5" fill="#fff"/><rect x="5.6" y="8.0" width="2.6" height="2.5" fill="#fff"/><rect x="9.6" y="8.0" width="2.6" height="2.5" fill="#fff"/><rect x="1.6" y="11.8" width="2.6" height="2.5" fill="#fff"/><rect x="5.6" y="11.8" width="2.6" height="2.5" fill="#fff"/><rect x="9.6" y="11.8" width="2.6" height="2.5" fill="#fff"/></svg>
<span class="t" style="top:818.94px;font-size:12px;line-height:17px;color:#111;letter-spacing:-0.371px;left:363px;">PMEP [3]</span>
<span class="t" style="top:818.94px;font-size:12px;line-height:17px;color:#111;letter-spacing:-0.146px;left:651px;">[3x2]  edit...</span>
<svg style="left:326.6px;top:842.4px;" width="6" height="9" viewBox="0 0 6 9"><path d="M0.6 0.8L5 4.4L0.6 8Z" fill="#fff" stroke="#7a7a7a" stroke-width="1"/></svg>
<svg style="left:342px;top:838.2px;" width="14" height="16" viewBox="0 0 14 16"><rect x="0" y="0" width="13.4" height="15.6" fill="#2a7698"/><rect x="1.6" y="4.2" width="2.6" height="2.5" fill="#fff"/><rect x="5.6" y="4.2" width="2.6" height="2.5" fill="#fff"/><rect x="9.6" y="4.2" width="2.6" height="2.5" fill="#fff"/><rect x="1.6" y="8.0" width="2.6" height="2.5" fill="#fff"/><rect x="5.6" y="8.0" width="2.6" height="2.5" fill="#fff"/><rect x="9.6" y="8.0" width="2.6" height="2.5" fill="#fff"/><rect x="1.6" y="11.8" width="2.6" height="2.5" fill="#fff"/><rect x="5.6" y="11.8" width="2.6" height="2.5" fill="#fff"/><rect x="9.6" y="11.8" width="2.6" height="2.5" fill="#fff"/></svg>
<span class="t" style="top:838.94px;font-size:12px;line-height:17px;color:#111;letter-spacing:-0.098px;left:363px;">exhaust temperature [3]</span>
<span class="t" style="top:838.94px;font-size:12px;line-height:17px;color:#111;letter-spacing:-0.146px;left:651px;">[3x2]  edit...</span>
<svg style="left:326.6px;top:862.4px;" width="6" height="9" viewBox="0 0 6 9"><path d="M0.6 0.8L5 4.4L0.6 8Z" fill="#fff" stroke="#7a7a7a" stroke-width="1"/></svg>
<svg style="left:342px;top:858.2px;" width="14" height="16" viewBox="0 0 14 16"><rect x="0" y="0" width="13.4" height="15.6" fill="#2a7698"/><rect x="1.6" y="4.2" width="2.6" height="2.5" fill="#fff"/><rect x="5.6" y="4.2" width="2.6" height="2.5" fill="#fff"/><rect x="9.6" y="4.2" width="2.6" height="2.5" fill="#fff"/><rect x="1.6" y="8.0" width="2.6" height="2.5" fill="#fff"/><rect x="5.6" y="8.0" width="2.6" height="2.5" fill="#fff"/><rect x="9.6" y="8.0" width="2.6" height="2.5" fill="#fff"/><rect x="1.6" y="11.8" width="2.6" height="2.5" fill="#fff"/><rect x="5.6" y="11.8" width="2.6" height="2.5" fill="#fff"/><rect x="9.6" y="11.8" width="2.6" height="2.5" fill="#fff"/></svg>
<span class="t" style="top:858.94px;font-size:12px;line-height:17px;color:#111;letter-spacing:-0.179px;left:363px;">CO emissions [3]</span>
<span class="t" style="top:858.94px;font-size:12px;line-height:17px;color:#111;letter-spacing:-0.146px;left:651px;">[3x2]  edit...</span>
<svg style="left:326.6px;top:882.4px;" width="6" height="9" viewBox="0 0 6 9"><path d="M0.6 0.8L5 4.4L0.6 8Z" fill="#fff" stroke="#7a7a7a" stroke-width="1"/></svg>
<svg style="left:342px;top:878.2px;" width="14" height="16" viewBox="0 0 14 16"><rect x="0" y="0" width="13.4" height="15.6" fill="#2a7698"/><rect x="1.6" y="4.2" width="2.6" height="2.5" fill="#fff"/><rect x="5.6" y="4.2" width="2.6" height="2.5" fill="#fff"/><rect x="9.6" y="4.2" width="2.6" height="2.5" fill="#fff"/><rect x="1.6" y="8.0" width="2.6" height="2.5" fill="#fff"/><rect x="5.6" y="8.0" width="2.6" height="2.5" fill="#fff"/><rect x="9.6" y="8.0" width="2.6" height="2.5" fill="#fff"/><rect x="1.6" y="11.8" width="2.6" height="2.5" fill="#fff"/><rect x="5.6" y="11.8" width="2.6" height="2.5" fill="#fff"/><rect x="9.6" y="11.8" width="2.6" height="2.5" fill="#fff"/></svg>
<span class="t" style="top:878.94px;font-size:12px;line-height:17px;color:#111;letter-spacing:-0.080px;left:363px;">HC emission [3]</span>
<span class="t" style="top:878.94px;font-size:12px;line-height:17px;color:#111;letter-spacing:-0.146px;left:651px;">[3x2]  edit...</span>
<svg style="left:326.6px;top:902.4px;" width="6" height="9" viewBox="0 0 6 9"><path d="M0.6 0.8L5 4.4L0.6 8Z" fill="#fff" stroke="#7a7a7a" stroke-width="1"/></svg>
<svg style="left:342px;top:898.2px;" width="14" height="16" viewBox="0 0 14 16"><rect x="0" y="0" width="13.4" height="15.6" fill="#2a7698"/><rect x="1.6" y="4.2" width="2.6" height="2.5" fill="#fff"/><rect x="5.6" y="4.2" width="2.6" height="2.5" fill="#fff"/><rect x="9.6" y="4.2" width="2.6" height="2.5" fill="#fff"/><rect x="1.6" y="8.0" width="2.6" height="2.5" fill="#fff"/><rect x="5.6" y="8.0" width="2.6" height="2.5" fill="#fff"/><rect x="9.6" y="8.0" width="2.6" height="2.5" fill="#fff"/><rect x="1.6" y="11.8" width="2.6" height="2.5" fill="#fff"/><rect x="5.6" y="11.8" width="2.6" height="2.5" fill="#fff"/><rect x="9.6" y="11.8" width="2.6" height="2.5" fill="#fff"/></svg>
<span class="t" style="top:898.94px;font-size:12px;line-height:17px;color:#111;letter-spacing:-0.168px;left:363px;">NOx emissions [3]</span>
<span class="t" style="top:898.94px;font-size:12px;line-height:17px;color:#111;letter-spacing:-0.146px;left:651px;">[3x2]  edit...</span>
<svg style="left:326.6px;top:922.4px;" width="6" height="9" viewBox="0 0 6 9"><path d="M0.6 0.8L5 4.4L0.6 8Z" fill="#fff" stroke="#7a7a7a" stroke-width="1"/></svg>
<svg style="left:342px;top:918.2px;" width="14" height="16" viewBox="0 0 14 16"><rect x="0" y="0" width="13.4" height="15.6" fill="#2a7698"/><rect x="1.6" y="4.2" width="2.6" height="2.5" fill="#fff"/><rect x="5.6" y="4.2" width="2.6" height="2.5" fill="#fff"/><rect x="9.6" y="4.2" width="2.6" height="2.5" fill="#fff"/><rect x="1.6" y="8.0" width="2.6" height="2.5" fill="#fff"/><rect x="5.6" y="8.0" width="2.6" height="2.5" fill="#fff"/><rect x="9.6" y="8.0" width="2.6" height="2.5" fill="#fff"/><rect x="1.6" y="11.8" width="2.6" height="2.5" fill="#fff"/><rect x="5.6" y="11.8" width="2.6" height="2.5" fill="#fff"/><rect x="9.6" y="11.8" width="2.6" height="2.5" fill="#fff"/></svg>
<span class="t" style="top:918.94px;font-size:12px;line-height:17px;color:#111;letter-spacing:-0.160px;left:363px;">soot Emissions [3]</span>
<span class="t" style="top:918.94px;font-size:12px;line-height:17px;color:#111;letter-spacing:-0.146px;left:651px;">[3x2]  edit...</span>
<svg style="left:326.6px;top:942.4px;" width="6" height="9" viewBox="0 0 6 9"><path d="M0.6 0.8L5 4.4L0.6 8Z" fill="#fff" stroke="#7a7a7a" stroke-width="1"/></svg>
<svg style="left:342px;top:938.2px;" width="14" height="16" viewBox="0 0 14 16"><rect x="0" y="0" width="13.4" height="15.6" fill="#2a7698"/><rect x="1.6" y="4.2" width="2.6" height="2.5" fill="#fff"/><rect x="5.6" y="4.2" width="2.6" height="2.5" fill="#fff"/><rect x="9.6" y="4.2" width="2.6" height="2.5" fill="#fff"/><rect x="1.6" y="8.0" width="2.6" height="2.5" fill="#fff"/><rect x="5.6" y="8.0" width="2.6" height="2.5" fill="#fff"/><rect x="9.6" y="8.0" width="2.6" height="2.5" fill="#fff"/><rect x="1.6" y="11.8" width="2.6" height="2.5" fill="#fff"/><rect x="5.6" y="11.8" width="2.6" height="2.5" fill="#fff"/><rect x="9.6" y="11.8" width="2.6" height="2.5" fill="#fff"/></svg>
<span class="t" style="top:938.94px;font-size:12px;line-height:17px;color:#111;letter-spacing:-0.151px;left:363px;">thermal losses emissions [3]</span>
<span class="t" style="top:938.94px;font-size:12px;line-height:17px;color:#111;letter-spacing:-0.146px;left:651px;">[3x2]  edit...</span>
<span class="t" style="top:191.82px;font-size:12px;line-height:17px;color:#111;left:1091.3px;width:400px;text-align:right;">Component properties</span>
<span class="t" style="top:231.52px;font-size:12px;line-height:17px;color:#111;left:1023.2px;width:400px;text-align:right;">Attributes</span>
<span class="t" style="top:272.12px;font-size:12px;line-height:17px;color:#111;left:1086.6px;width:400px;text-align:right;">Parameter description</span>
<span class="t" style="top:296.62px;font-size:12px;line-height:17px;color:#111;left:1082.3px;width:400px;text-align:right;">No description available</span>
<span class="t" style="top:377.52px;font-size:12px;line-height:17px;color:#111;left:1066px;width:400px;text-align:right;">Comments/Notes</span>
<div style="left:1351px;top:399px;width:550.6px;height:60.6px;border:1px solid #c6c6c6;border-top-color:#868686;background:#fff;"></div>
<div style="left:1351px;top:505px;width:551px;height:32px;background:#fff;border-right:1px solid #b9b9b9;"></div>
<div style="left:1351px;top:536.4px;width:549px;height:420.2px;background:#fff;border:1px solid #5a5a5a;"></div>
<svg style="left:0;top:0" width="1920" height="1038" viewBox="0 0 1920 1038"><defs><linearGradient id="rs" gradientUnits="userSpaceOnUse" x1="1546.5" y1="644.0" x2="1520.4" y2="836.0"><stop offset="0.000" stop-color="#de4a04"/><stop offset="0.060" stop-color="#e06602"/><stop offset="0.120" stop-color="#e29200"/><stop offset="0.180" stop-color="#e6c200"/><stop offset="0.235" stop-color="#e8e000"/><stop offset="0.300" stop-color="#ccdc10"/><stop offset="0.380" stop-color="#98d42a"/><stop offset="0.480" stop-color="#5ccc56"/><stop offset="0.570" stop-color="#28c68c"/><stop offset="0.650" stop-color="#0ac2b8"/><stop offset="0.720" stop-color="#00bcd8"/><stop offset="0.780" stop-color="#009edc"/><stop offset="0.860" stop-color="#0074dc"/><stop offset="0.940" stop-color="#004ce0"/><stop offset="1.000" stop-color="#0036e4"/></linearGradient><linearGradient id="rc" gradientUnits="userSpaceOnUse" x1="1875.2" y1="620.8" x2="1875.2" y2="872.9"><stop offset="0.000" stop-color="#ff0000"/><stop offset="0.070" stop-color="#ee2a04"/><stop offset="0.143" stop-color="#dc5408"/><stop offset="0.215" stop-color="#e09400"/><stop offset="0.286" stop-color="#e8d000"/><stop offset="0.315" stop-color="#e6e000"/><stop offset="0.360" stop-color="#c8dc10"/><stop offset="0.429" stop-color="#94d42c"/><stop offset="0.500" stop-color="#5ccc58"/><stop offset="0.571" stop-color="#28c68c"/><stop offset="0.645" stop-color="#08c2b8"/><stop offset="0.714" stop-color="#00bcd8"/><stop offset="0.786" stop-color="#0092dc"/><stop offset="0.857" stop-color="#0062dc"/><stop offset="0.930" stop-color="#0030e8"/><stop offset="1.000" stop-color="#0000f6"/></linearGradient></defs><g transform="translate(364.5,314)"><g fill="none" stroke="#1f6f93"><circle cx="1057.6" cy="204.8" r="5.5" stroke-width="2"/><path d="M1061.9 209.3L1066 213.4" stroke-width="2.8" stroke-linecap="round"/><path d="M1055.2 208L1057.6 201.4L1060 208M1056 206H1059.2" stroke-width="0.9"/><path d="M1053.2 209.6C1055 211.8 1058 212.4 1060 211.4" stroke-width="0.9"/></g><g fill="none" stroke="#1f6f93"><circle cx="1084.2" cy="204.8" r="5.5" stroke-width="2"/><path d="M1088.5 209.3L1092.4 213.2" stroke-width="2.8" stroke-linecap="round"/><path d="M1081.2 201.8L1083.2 203.8M1087.2 201.8L1085.2 203.8M1081.2 207.8L1083.2 205.8M1087.2 207.8L1085.2 205.8" stroke-width="1.7"/></g><g fill="none" stroke="#8c8c8c"><circle cx="1111.6" cy="205" r="5.5" stroke-width="2"/><path d="M1115.9 209.5L1119.6 213.2" stroke-width="2.8" stroke-linecap="round"/><path d="M1109.4 206.2C1110 202.6 1114.4 200.8 1118.4 201.8" stroke-width="1.3"/><path d="M1108.2 204.4L1109.4 207.2L1112 205.8" stroke-width="1"/></g><path d="M1129.5 196V216.5" stroke="#c4c4c4" stroke-width="1"/><g fill="none" stroke="#8c8c8c" stroke-width="1.7"><circle cx="1146.2" cy="206" r="3.3"/><path d="M1146.2 198.2V202.6M1146.2 209.4V213.8"/><circle cx="1173" cy="206" r="3.3"/><path d="M1173 198.2V202.6M1173 209.4V213.8M1165.4 206H1169.6M1176.4 206H1180.6"/><circle cx="1195.4" cy="202.6" r="3.2"/><circle cx="1202.6" cy="208.8" r="3.2"/><path d="M1195.4 205.8V213.4M1202.6 198.2V205.6M1192 213.4H1203.6"/></g></g><path d="M1467.0 694.9L1549.4 611.6M1549.4 611.6L1776.0 641.5M1467.0 699.4L1549.4 616.1M1549.4 616.1L1776.0 646.0M1467.0 703.9L1549.4 620.6M1549.4 620.6L1776.0 650.5M1467.0 708.3L1549.4 625.2M1549.4 625.2L1776.0 654.9M1467.0 712.8L1549.4 629.7M1549.4 629.7L1776.0 659.4M1467.0 717.3L1549.4 634.2M1549.4 634.2L1776.0 663.9M1467.0 721.8L1549.4 638.7M1549.4 638.7L1776.0 668.4M1467.0 726.2L1549.4 643.2M1549.4 643.2L1776.0 672.8M1467.0 730.7L1549.4 647.8M1549.4 647.8L1776.0 677.3M1467.0 735.2L1549.4 652.3M1549.4 652.3L1776.0 681.8M1467.0 739.7L1549.4 656.8M1549.4 656.8L1776.0 686.3M1467.0 744.1L1549.4 661.3M1549.4 661.3L1776.0 690.7M1467.0 748.6L1549.4 665.8M1549.4 665.8L1776.0 695.2M1467.0 753.1L1549.4 670.4M1549.4 670.4L1776.0 699.7M1467.0 757.6L1549.4 674.9M1549.4 674.9L1776.0 704.2M1467.0 762.1L1549.4 679.4M1549.4 679.4L1776.0 708.7M1467.0 766.5L1549.4 683.9M1549.4 683.9L1776.0 713.1M1467.0 771.0L1549.4 688.4M1549.4 688.4L1776.0 717.6M1467.0 775.5L1549.4 693.0M1549.4 693.0L1776.0 722.1M1467.0 780.0L1549.4 697.5M1549.4 697.5L1776.0 726.6M1467.0 784.4L1549.4 702.0M1549.4 702.0L1776.0 731.0M1467.0 788.9L1549.4 706.5M1549.4 706.5L1776.0 735.5M1467.0 793.4L1549.4 711.0M1549.4 711.0L1776.0 740.0M1467.0 797.9L1549.4 715.6M1549.4 715.6L1776.0 744.5M1467.0 802.4L1549.4 720.1M1549.4 720.1L1776.0 749.0M1467.0 806.8L1549.4 724.6M1549.4 724.6L1776.0 753.4M1467.0 811.3L1549.4 729.1M1549.4 729.1L1776.0 757.9M1467.0 815.8L1549.4 733.6M1549.4 733.6L1776.0 762.4M1467.0 820.3L1549.4 738.2M1549.4 738.2L1776.0 766.9M1467.0 824.7L1549.4 742.7M1549.4 742.7L1776.0 771.3M1467.0 829.2L1549.4 747.2M1549.4 747.2L1776.0 775.8M1467.0 833.7L1549.4 751.7M1549.4 751.7L1776.0 780.3M1467.0 838.2L1549.4 756.2M1549.4 756.2L1776.0 784.8M1467.0 842.6L1549.4 760.8M1549.4 760.8L1776.0 789.2M1467.0 847.1L1549.4 765.3M1549.4 765.3L1776.0 793.7M1467.0 851.6L1549.4 769.8M1549.4 769.8L1776.0 798.2M1467.0 694.9L1467.0 851.6M1549.4 611.6L1549.4 769.8M1472.9 688.9L1472.9 845.8M1565.6 613.7L1565.6 771.8M1478.8 683.0L1478.8 839.9M1581.8 615.9L1581.8 773.9M1484.7 677.0L1484.7 834.1M1598.0 618.0L1598.0 775.9M1490.5 671.1L1490.5 828.2M1614.1 620.1L1614.1 777.9M1496.4 665.1L1496.4 822.4M1630.3 622.3L1630.3 779.9M1502.3 659.2L1502.3 816.5M1646.5 624.4L1646.5 782.0M1508.2 653.2L1508.2 810.7M1662.7 626.5L1662.7 784.0M1514.1 647.3L1514.1 804.9M1678.9 628.7L1678.9 786.0M1520.0 641.4L1520.0 799.0M1695.1 630.8L1695.1 788.1M1525.9 635.4L1525.9 793.2M1711.3 633.0L1711.3 790.1M1531.7 629.5L1531.7 787.3M1727.4 635.1L1727.4 792.1M1537.6 623.5L1537.6 781.5M1743.6 637.2L1743.6 794.1M1543.5 617.5L1543.5 775.6M1759.8 639.4L1759.8 796.2M1549.4 611.6L1549.4 769.8M1776.0 641.5L1776.0 798.2M1467.0 851.6L1549.4 769.8M1467.0 851.6L1694.0 882.4M1483.2 853.8L1565.6 771.8M1472.9 845.8L1699.9 876.4M1499.4 856.0L1581.8 773.9M1478.8 839.9L1705.7 870.4M1515.6 858.2L1598.0 775.9M1484.7 834.1L1711.6 864.4M1531.9 860.4L1614.1 777.9M1490.5 828.2L1717.4 858.3M1548.1 862.6L1630.3 779.9M1496.4 822.4L1723.3 852.3M1564.3 864.8L1646.5 782.0M1502.3 816.5L1729.1 846.3M1580.5 867.0L1662.7 784.0M1508.2 810.7L1735.0 840.3M1596.7 869.2L1678.9 786.0M1514.1 804.9L1740.9 834.3M1612.9 871.4L1695.1 788.1M1520.0 799.0L1746.7 828.3M1629.1 873.6L1711.3 790.1M1525.9 793.2L1752.6 822.3M1645.4 875.8L1727.4 792.1M1531.7 787.3L1758.4 816.2M1661.6 878.0L1743.6 794.1M1537.6 781.5L1764.3 810.2M1677.8 880.2L1759.8 796.2M1543.5 775.6L1770.1 804.2M1694.0 882.4L1776.0 798.2M1549.4 769.8L1776.0 798.2" fill="none" stroke="#b4b4b4" stroke-width="0.8" stroke-dasharray="1 2.2"/><path d="M1467.0 694.9L1549.4 611.6M1549.4 611.6L1776.0 641.5M1776.0 641.5L1776.0 798.2M1549.4 611.6L1549.4 769.8M1467.0 851.6L1549.4 769.8M1549.4 769.8L1776.0 798.2" fill="none" stroke="#a6a6a6" stroke-width="1"/><path d="M1546.5 644.0L1738.8 670.1L1675.9 857.6L1482.9 830.9Z" fill="url(#rs)"/><path d="M1467.0 694.9L1467.0 851.6M1467.0 851.6L1694.0 882.4M1694.0 882.4L1776.0 798.2M1467.0 694.9h-8.6M1467.0 699.4h-4.6M1467.0 703.9h-4.6M1467.0 708.3h-4.6M1467.0 712.8h-4.6M1467.0 717.3h-8.6M1467.0 721.8h-4.6M1467.0 726.2h-4.6M1467.0 730.7h-4.6M1467.0 735.2h-4.6M1467.0 739.7h-8.6M1467.0 744.1h-4.6M1467.0 748.6h-4.6M1467.0 753.1h-4.6M1467.0 757.6h-4.6M1467.0 762.1h-8.6M1467.0 766.5h-4.6M1467.0 771.0h-4.6M1467.0 775.5h-4.6M1467.0 780.0h-4.6M1467.0 784.4h-8.6M1467.0 788.9h-4.6M1467.0 793.4h-4.6M1467.0 797.9h-4.6M1467.0 802.4h-4.6M1467.0 806.8h-8.6M1467.0 811.3h-4.6M1467.0 815.8h-4.6M1467.0 820.3h-4.6M1467.0 824.7h-4.6M1467.0 829.2h-8.6M1467.0 833.7h-4.6M1467.0 838.2h-4.6M1467.0 842.6h-4.6M1467.0 847.1h-4.6M1467.0 851.6h-8.6M1467.0 851.6L1460.8 857.2M1483.2 853.8L1480.6 856.2M1499.4 856.0L1493.2 861.6M1515.6 858.2L1513.0 860.6M1531.9 860.4L1525.6 866.0M1548.1 862.6L1545.4 865.0M1564.3 864.8L1558.1 870.4M1580.5 867.0L1577.8 869.4M1596.7 869.2L1590.5 874.8M1612.9 871.4L1610.3 873.8M1629.1 873.6L1622.9 879.2M1645.4 875.8L1642.7 878.2M1661.6 878.0L1655.4 883.6M1677.8 880.2L1675.1 882.6M1694.0 882.4L1687.8 888.0M1694.0 882.4L1701.0 882.4M1699.9 876.4L1703.3 876.4M1705.7 870.4L1710.7 870.4M1711.6 864.4L1715.0 864.4M1717.4 858.3L1724.4 858.3M1723.3 852.3L1726.7 852.3M1729.1 846.3L1734.1 846.3M1735.0 840.3L1738.4 840.3M1740.9 834.3L1747.9 834.3M1746.7 828.3L1750.1 828.3M1752.6 822.3L1757.6 822.3M1758.4 816.2L1761.8 816.2M1764.3 810.2L1771.3 810.2M1770.1 804.2L1773.5 804.2M1776.0 798.2L1781.0 798.2" fill="none" stroke="#111" stroke-width="1.05"/><text x="1453" y="698.4" text-anchor="end" font-family='"Liberation Sans",sans-serif' font-weight="bold" font-size="11.7" fill="#0c0c14">4.5</text><text x="1453" y="720.8" text-anchor="end" font-family='"Liberation Sans",sans-serif' font-weight="bold" font-size="11.7" fill="#0c0c14">4.0</text><text x="1453" y="743.2" text-anchor="end" font-family='"Liberation Sans",sans-serif' font-weight="bold" font-size="11.7" fill="#0c0c14">3.5</text><text x="1453" y="765.6" text-anchor="end" font-family='"Liberation Sans",sans-serif' font-weight="bold" font-size="11.7" fill="#0c0c14">3.0</text><text x="1453" y="787.9" text-anchor="end" font-family='"Liberation Sans",sans-serif' font-weight="bold" font-size="11.7" fill="#0c0c14">2.5</text><text x="1453" y="810.3" text-anchor="end" font-family='"Liberation Sans",sans-serif' font-weight="bold" font-size="11.7" fill="#0c0c14">2.0</text><text x="1453" y="832.7" text-anchor="end" font-family='"Liberation Sans",sans-serif' font-weight="bold" font-size="11.7" fill="#0c0c14">1.5</text><text x="1453" y="855.1" text-anchor="end" font-family='"Liberation Sans",sans-serif' font-weight="bold" font-size="11.7" fill="#0c0c14">1.0</text><text x="1458" y="870.9" text-anchor="middle" font-family='"Liberation Sans",sans-serif' font-weight="bold" font-size="11.7" fill="#0c0c14">0</text><text x="1490.6" y="875.4" text-anchor="middle" font-family='"Liberation Sans",sans-serif' font-weight="bold" font-size="11.7" fill="#0c0c14">2</text><text x="1523" y="880.4" text-anchor="middle" font-family='"Liberation Sans",sans-serif' font-weight="bold" font-size="11.7" fill="#0c0c14">4</text><text x="1555.7" y="884.4" text-anchor="middle" font-family='"Liberation Sans",sans-serif' font-weight="bold" font-size="11.7" fill="#0c0c14">6</text><text x="1588" y="889.0" text-anchor="middle" font-family='"Liberation Sans",sans-serif' font-weight="bold" font-size="11.7" fill="#0c0c14">8</text><text x="1620" y="893.0" text-anchor="middle" font-family='"Liberation Sans",sans-serif' font-weight="bold" font-size="11.7" fill="#0c0c14">10</text><text x="1652.6" y="897.4" text-anchor="middle" font-family='"Liberation Sans",sans-serif' font-weight="bold" font-size="11.7" fill="#0c0c14">12</text><text x="1685" y="902.4" text-anchor="middle" font-family='"Liberation Sans",sans-serif' font-weight="bold" font-size="11.7" fill="#0c0c14">14</text><text x="1708.7" y="889.1" text-anchor="middle" font-family='"Liberation Sans",sans-serif' font-weight="bold" font-size="11.7" fill="#0c0c14">0</text><text x="1732.7" y="865.1999999999999" text-anchor="middle" font-family='"Liberation Sans",sans-serif' font-weight="bold" font-size="11.7" fill="#0c0c14">2</text><text x="1755.6" y="840.1999999999999" text-anchor="middle" font-family='"Liberation Sans",sans-serif' font-weight="bold" font-size="11.7" fill="#0c0c14">4</text><text x="1779.5" y="816.0" text-anchor="middle" font-family='"Liberation Sans",sans-serif' font-weight="bold" font-size="11.7" fill="#0c0c14">6</text><text x="1452" y="681.6" text-anchor="middle" font-family='"Liberation Sans",sans-serif' font-weight="bold" font-size="11.2" fill="#0c0c14">[null]</text><text x="1556" y="904.2" text-anchor="middle" font-family='"Liberation Sans",sans-serif' font-weight="bold" font-size="11" fill="#0c0c14">FMEP</text><text x="1715" y="903.2" text-anchor="middle" font-family='"Liberation Sans",sans-serif' font-weight="bold" font-size="11.2" fill="#0c0c14">[null]</text><text x="1786" y="850.2" text-anchor="middle" font-family='"Liberation Sans",sans-serif' font-weight="bold" font-size="11" fill="#0c0c14">FMEP</text><text x="1801" y="785.2" text-anchor="middle" font-family='"Liberation Sans",sans-serif' font-weight="bold" font-size="11.7" fill="#0c0c14">x10</text><text x="1834" y="760.2" text-anchor="middle" font-family='"Liberation Sans",sans-serif' font-weight="bold" font-size="11.2" fill="#0c0c14">[null]</text><text x="1416" y="773.6" text-anchor="middle" font-family='"Liberation Sans",sans-serif' font-weight="bold" font-size="11" fill="#0c0c14">FMEP</text><rect x="1875.2" y="620.8" width="12.700000000000045" height="252.10000000000002" fill="url(#rc)"/><path d="M1875.2 620.8V872.9M1875.2 620.8h-6.4M1875.2 628.0h-3.4M1875.2 635.2h-3.4M1875.2 642.4h-3.4M1875.2 649.6h-3.4M1875.2 656.8h-6.4M1875.2 664.0h-3.4M1875.2 671.2h-3.4M1875.2 678.4h-3.4M1875.2 685.6h-3.4M1875.2 692.8h-6.4M1875.2 700.0h-3.4M1875.2 707.2h-3.4M1875.2 714.4h-3.4M1875.2 721.6h-3.4M1875.2 728.8h-6.4M1875.2 736.0h-3.4M1875.2 743.2h-3.4M1875.2 750.5h-3.4M1875.2 757.7h-3.4M1875.2 764.9h-6.4M1875.2 772.1h-3.4M1875.2 779.3h-3.4M1875.2 786.5h-3.4M1875.2 793.7h-3.4M1875.2 800.9h-6.4M1875.2 808.1h-3.4M1875.2 815.3h-3.4M1875.2 822.5h-3.4M1875.2 829.7h-3.4M1875.2 836.9h-6.4M1875.2 844.1h-3.4M1875.2 851.3h-3.4M1875.2 858.5h-3.4M1875.2 865.7h-3.4M1875.2 872.9h-6.4" fill="none" stroke="#111" stroke-width="1.1"/><text x="1867.6" y="626.1" text-anchor="end" font-family='"Liberation Sans",sans-serif' font-weight="bold" font-size="11.7" fill="#0c0c14">4.5</text><text x="1867.6" y="662.1" text-anchor="end" font-family='"Liberation Sans",sans-serif' font-weight="bold" font-size="11.7" fill="#0c0c14">4.0</text><text x="1867.6" y="698.1" text-anchor="end" font-family='"Liberation Sans",sans-serif' font-weight="bold" font-size="11.7" fill="#0c0c14">3.5</text><text x="1867.6" y="734.1" text-anchor="end" font-family='"Liberation Sans",sans-serif' font-weight="bold" font-size="11.7" fill="#0c0c14">3.0</text><text x="1867.6" y="770.2" text-anchor="end" font-family='"Liberation Sans",sans-serif' font-weight="bold" font-size="11.7" fill="#0c0c14">2.5</text><text x="1867.6" y="806.2" text-anchor="end" font-family='"Liberation Sans",sans-serif' font-weight="bold" font-size="11.7" fill="#0c0c14">2.0</text><text x="1867.6" y="842.2" text-anchor="end" font-family='"Liberation Sans",sans-serif' font-weight="bold" font-size="11.7" fill="#0c0c14">1.5</text><text x="1867.6" y="878.2" text-anchor="end" font-family='"Liberation Sans",sans-serif' font-weight="bold" font-size="11.7" fill="#0c0c14">1.0</text><text x="1812.2" y="778" font-family='"Liberation Sans",sans-serif' font-weight="bold" font-size="8.5" fill="#0c0c14">3</text></svg>
<span class="t" style="top:968.52px;font-size:12px;line-height:17px;color:#111;letter-spacing:-0.645px;left:1351.4px;">FMEP =</span>
<span class="t" style="top:968.52px;font-size:12px;line-height:17px;color:#111;left:1397.4px;">0</span>
<div style="left:1419px;top:970px;width:482.4px;height:1px;background:#9a9a9a;"></div>
<div style="left:1419px;top:971px;width:482px;height:1px;background:#f2f2f2;"></div>
<svg style="left:1410px;top:964.4px;" width="10" height="18" viewBox="0 0 10 18"><path d="M1.6 0.6H7.8Q8.8 0.6 8.8 1.6V11.6L4.7 15.8L0.6 11.6V1.6Q0.6 0.6 1.6 0.6Z" fill="url(#thg2)" stroke="#8a8a8a" stroke-width="1"/><defs><linearGradient id="thg2" x1="0" y1="0" x2="0" y2="1"><stop offset="0" stop-color="#f6f6f6"/><stop offset="0.55" stop-color="#e2e2e2"/><stop offset="1" stop-color="#c4c4c4"/></linearGradient></defs></svg>
<div style="left:1415.9px;top:982px;width:1px;height:4.6px;background:#606060;"></div>
<div style="left:1447.9px;top:982px;width:1px;height:4.6px;background:#606060;"></div>
<div style="left:1479.9px;top:982px;width:1px;height:4.6px;background:#606060;"></div>
<div style="left:1511.9px;top:982px;width:1px;height:4.6px;background:#606060;"></div>
<div style="left:1543.9px;top:982px;width:1px;height:4.6px;background:#606060;"></div>
<div style="left:1575.9px;top:982px;width:1px;height:4.6px;background:#606060;"></div>
<div style="left:1607.9px;top:982px;width:1px;height:4.6px;background:#606060;"></div>
<div style="left:1639.9px;top:982px;width:1px;height:4.6px;background:#606060;"></div>
<div style="left:1671.9px;top:982px;width:1px;height:4.6px;background:#606060;"></div>
<div style="left:1703.9px;top:982px;width:1px;height:4.6px;background:#606060;"></div>
<div style="left:1735.9px;top:982px;width:1px;height:4.6px;background:#606060;"></div>
<div style="left:1767.9px;top:982px;width:1px;height:4.6px;background:#606060;"></div>
<div style="left:1799.9px;top:982px;width:1px;height:4.6px;background:#606060;"></div>
<div style="left:1831.9px;top:982px;width:1px;height:4.6px;background:#606060;"></div>
<div style="left:1863.9px;top:982px;width:1px;height:4.6px;background:#606060;"></div>
<div style="left:1895.9px;top:982px;width:1px;height:4.6px;background:#606060;"></div>
<svg style="left:1912px;top:429px;" width="8" height="25" viewBox="0 0 8 25"><path d="M7.2 1.2V14.2L4 13L1.6 14.8L6.4 22.4L8 23.2V1.2Z" fill="#fff" stroke="#1c1c2c" stroke-width="1.2" stroke-linejoin="round"/></svg>
<div style="left:502.6px;top:150px;width:915px;height:737px;border-radius:7px;background:#2c3035;box-shadow:5px 5px 10px 2px rgba(0,0,0,.7),0 0 9px 2px rgba(0,0,0,.55);"></div>
<div style="left:504px;top:151px;width:912.5px;height:735px;border-radius:6px;background:linear-gradient(90deg,#a9c3df 0%,#a2bedc 7%,#93b3d6 15%,#8daed3 21%,#9bb9da 29%,#a9c4e0 40%,#a5c0de 60%,#9cb9da 80%,#a4bfdd 100%);box-shadow:inset 0 0 0 1px rgba(226,238,250,.85);"></div>
<div style="left:504px;top:180px;width:6px;height:705.5px;background:linear-gradient(#aec7e2 0px,#c6d8ec 90px,#e0ebf6 172px,#92b2d6 173px,#97b6d8 400px,#a0bcdb 705px);border-radius:0 0 0 5px;box-shadow:inset 1px 0 0 rgba(226,238,250,.9);"></div>
<div style="left:1410.5px;top:180px;width:6px;height:705.5px;background:linear-gradient(#aec7e2 0px,#c6d8ec 90px,#e0ebf6 172px,#92b2d6 173px,#97b6d8 400px,#a0bcdb 705px);border-radius:0 0 5px 0;box-shadow:inset -1px 0 0 rgba(226,238,250,.9);"></div>
<div style="left:509px;top:880px;width:902px;height:5.5px;background:#a0bcdb;border-bottom:1px solid rgba(226,238,250,.9);"></div>
<div style="left:509px;top:179px;width:902px;height:702px;background:#e9e9e9;border:1px solid #434c5a;border-radius:2px 2px 0 0;box-shadow:inset 0 0 0 1px #f2f2f2;"></div>
<div style="left:506px;top:152px;width:190px;height:27px;background:linear-gradient(90deg,rgba(255,255,255,.42) 0%,rgba(255,255,255,.4) 70%,rgba(255,255,255,0) 100%);border-radius:5px 0 0 0;"></div>
<svg style="left:510px;top:157px;" width="16" height="16" viewBox="0 0 16 16"><rect x="0" y="0" width="16" height="16" fill="#0d4a7b"/><path d="M2.4 1.9H12L2.6 13.9H12.6M3 2.4L8.6 8.4" fill="none" stroke="#4a86b2" stroke-width="1.5"/><path d="M3.8 11.6L8.3 5.6L14.4 14" fill="none" stroke="#fff" stroke-width="1.9"/></svg>
<span class="t" style="top:156.72px;font-size:12px;line-height:17px;color:#0a0a0a;letter-spacing:-0.010px;left:531px;">Table Editor - b'FMEP'</span>
<div style="left:1308px;top:150px;width:103px;height:20px;border:1px solid #4a5566;border-top:none;border-radius:0 0 5px 5px;overflow:hidden;background:#b7c9de;"><div style="left:0px;top:0px;width:28px;height:19px;background:linear-gradient(#e2e8f0 0%,#cdd7e4 45%,#a9bad0 50%,#b9c8da 100%);border-right:1px solid #4a5566;"></div><div style="left:28px;top:0px;width:27px;height:19px;background:linear-gradient(#e2e8f0 0%,#cdd7e4 45%,#a9bad0 50%,#b9c8da 100%);border-right:1px solid #4a5566;"></div><div style="left:55px;top:0px;width:47px;height:19px;background:linear-gradient(#e3a48f 0%,#d4735a 45%,#c4401f 50%,#cf5a38 85%,#d9805f 100%);"></div></div>
<svg style="left:1317px;top:160px;" width="13" height="6" viewBox="0 0 13 6"><rect x="0.6" y="0.6" width="11" height="3.8" rx="0.8" fill="#fff" stroke="#46505e" stroke-width="1"/></svg>
<svg style="left:1343px;top:154px;" width="13" height="11" viewBox="0 0 13 11"><rect x="0.8" y="0.8" width="11" height="9" rx="0.8" fill="#fff" stroke="#46505e" stroke-width="1"/><rect x="3.6" y="3.8" width="5.4" height="3.2" fill="#aebfd6" stroke="#46505e" stroke-width="1"/></svg>
<svg style="left:1380px;top:154px;" width="14" height="11" viewBox="0 0 14 11"><path d="M1.6 1.4H5L7 3.7L9 1.4H12.4L8.8 5.4L12.6 9.8H9.2L7 7.2L4.8 9.8H1.4L5.2 5.4Z" fill="#fff" stroke="#4a2018" stroke-width="1" stroke-linejoin="round"/></svg>
<div style="left:521px;top:191px;width:460px;height:322px;background:#fff;border:1px solid #8c8c8c;"></div>
<div style="left:522px;top:192px;width:35px;height:309px;background:#c8c8c8;"></div>
<div style="left:522px;top:192px;width:458px;height:24px;background:#c8c8c8;border-bottom:1px solid #959595;"></div>
<div style="left:556px;top:192px;width:1px;height:83px;background:#959595;"></div>
<div style="left:636px;top:192px;width:1px;height:24px;background:#959595;"></div>
<span class="t" style="top:196.83px;font-size:11px;line-height:15px;color:#111;font-weight:bold;left:396.5px;width:400px;text-align:center;">1</span>
<div style="left:716px;top:192px;width:1px;height:24px;background:#959595;"></div>
<span class="t" style="top:196.83px;font-size:11px;line-height:15px;color:#111;left:476.5px;width:400px;text-align:center;">2</span>
<div style="left:796px;top:192px;width:1px;height:24px;background:#959595;"></div>
<span class="t" style="top:196.83px;font-size:11px;line-height:15px;color:#111;left:556.5px;width:400px;text-align:center;">3</span>
<div style="left:876px;top:192px;width:1px;height:24px;background:#959595;"></div>
<span class="t" style="top:196.83px;font-size:11px;line-height:15px;color:#111;left:636.5px;width:400px;text-align:center;">4</span>
<div style="left:956px;top:192px;width:1px;height:24px;background:#959595;"></div>
<span class="t" style="top:196.83px;font-size:11px;line-height:15px;color:#111;left:716.5px;width:400px;text-align:center;">5</span>

<div style="left:522px;top:216px;width:35px;height:20px;border-bottom:1px solid #959595;"></div>
<span class="t" style="top:218.93px;font-size:11px;line-height:15px;color:#111;left:338.20000000000005px;width:400px;text-align:center;">X1</span>
<div style="left:557px;top:216px;width:80px;height:20px;border-right:1px solid #c6c6c6;border-bottom:1px solid #c6c6c6;overflow:hidden;"></div>
<div style="left:557px;top:216px;width:80px;height:20px;overflow:hidden;"><span class="t" style="top:3.23px;font-size:11px;line-height:15px;color:#111;left:2.6px;">0.5</span></div>
<div style="left:637px;top:216px;width:80px;height:20px;border-right:1px solid #c6c6c6;border-bottom:1px solid #c6c6c6;overflow:hidden;"></div>
<div style="left:637px;top:216px;width:80px;height:20px;overflow:hidden;"><span class="t" style="top:3.23px;font-size:11px;line-height:15px;color:#111;left:2.6px;">0.74283304...</span></div>
<div style="left:717px;top:216px;width:80px;height:20px;border-right:1px solid #c6c6c6;border-bottom:1px solid #c6c6c6;overflow:hidden;"></div>
<div style="left:717px;top:216px;width:80px;height:20px;overflow:hidden;"><span class="t" style="top:3.23px;font-size:11px;line-height:15px;color:#111;left:2.6px;">0.98566608...</span></div>
<div style="left:797px;top:216px;width:80px;height:20px;border-right:1px solid #c6c6c6;border-bottom:1px solid #c6c6c6;overflow:hidden;"></div>
<div style="left:797px;top:216px;width:80px;height:20px;overflow:hidden;"><span class="t" style="top:3.23px;font-size:11px;line-height:15px;color:#111;left:2.6px;">1.22849912...</span></div>
<div style="left:877px;top:216px;width:80px;height:20px;border-right:1px solid #c6c6c6;border-bottom:1px solid #c6c6c6;overflow:hidden;"></div>
<div style="left:877px;top:216px;width:80px;height:20px;overflow:hidden;"><span class="t" style="top:3.23px;font-size:11px;line-height:15px;color:#111;left:2.6px;">1.47133216...</span></div>
<div style="left:957px;top:216px;width:23px;height:20px;border-bottom:1px solid #c6c6c6;overflow:hidden;"></div>
<div style="left:957px;top:216px;width:23px;height:20px;overflow:hidden;"><span class="t" style="top:3.23px;font-size:11px;line-height:15px;color:#111;left:2.6px;">1.71</span></div>
<div style="left:522px;top:236px;width:35px;height:20px;border-bottom:1px solid #959595;"></div>
<span class="t" style="top:238.93px;font-size:11px;line-height:15px;color:#111;font-weight:bold;left:338.20000000000005px;width:400px;text-align:center;">X2</span>
<div style="left:557px;top:236px;width:80px;height:20px;border-right:1px solid #c6c6c6;border-bottom:1px solid #c6c6c6;overflow:hidden;"></div>
<div style="left:637px;top:236px;width:80px;height:20px;border-right:1px solid #c6c6c6;border-bottom:1px solid #c6c6c6;overflow:hidden;"></div>
<div style="left:637px;top:236px;width:80px;height:20px;overflow:hidden;"><span class="t" style="top:3.23px;font-size:11px;line-height:15px;color:#111;left:2.6px;">1000.0</span></div>
<div style="left:717px;top:236px;width:80px;height:20px;border-right:1px solid #c6c6c6;border-bottom:1px solid #c6c6c6;overflow:hidden;"></div>
<div style="left:717px;top:236px;width:80px;height:20px;overflow:hidden;"><span class="t" style="top:3.23px;font-size:11px;line-height:15px;color:#111;left:2.6px;">1500.0</span></div>
<div style="left:797px;top:236px;width:80px;height:20px;border-right:1px solid #c6c6c6;border-bottom:1px solid #c6c6c6;overflow:hidden;"></div>
<div style="left:797px;top:236px;width:80px;height:20px;overflow:hidden;"><span class="t" style="top:3.23px;font-size:11px;line-height:15px;color:#111;left:2.6px;">2000.0</span></div>
<div style="left:877px;top:236px;width:80px;height:20px;border-right:1px solid #c6c6c6;border-bottom:1px solid #c6c6c6;overflow:hidden;"></div>
<div style="left:877px;top:236px;width:80px;height:20px;overflow:hidden;"><span class="t" style="top:3.23px;font-size:11px;line-height:15px;color:#111;left:2.6px;">2500.0</span></div>
<div style="left:957px;top:236px;width:23px;height:20px;border-bottom:1px solid #c6c6c6;overflow:hidden;"></div>
<div style="left:957px;top:236px;width:23px;height:20px;overflow:hidden;"><span class="t" style="top:3.23px;font-size:11px;line-height:15px;color:#111;left:2.6px;">3000</span></div>
<div style="left:522px;top:256px;width:35px;height:20px;border-bottom:1px solid #959595;"></div>
<span class="t" style="top:258.93px;font-size:11px;line-height:15px;color:#111;left:338.20000000000005px;width:400px;text-align:center;">X3</span>
<div style="left:557px;top:256px;width:80px;height:20px;border-right:1px solid #c6c6c6;border-bottom:1px solid #c6c6c6;overflow:hidden;"></div>
<div style="left:557px;top:256px;width:80px;height:20px;overflow:hidden;"><span class="t" style="top:3.23px;font-size:11px;line-height:15px;color:#111;left:2.6px;">0.0</span></div>
<div style="left:637px;top:256px;width:80px;height:20px;border-right:1px solid #c6c6c6;border-bottom:1px solid #c6c6c6;overflow:hidden;"></div>
<div style="left:637px;top:256px;width:80px;height:20px;overflow:hidden;"><span class="t" style="top:3.23px;font-size:11px;line-height:15px;color:#111;left:2.6px;">10.0</span></div>
<div style="left:717px;top:256px;width:80px;height:20px;border-right:1px solid #c6c6c6;border-bottom:1px solid #c6c6c6;overflow:hidden;"></div>
<div style="left:717px;top:256px;width:80px;height:20px;overflow:hidden;"><span class="t" style="top:3.23px;font-size:11px;line-height:15px;color:#111;left:2.6px;">20.0</span></div>
<div style="left:797px;top:256px;width:80px;height:20px;border-right:1px solid #c6c6c6;border-bottom:1px solid #c6c6c6;overflow:hidden;"></div>
<div style="left:797px;top:256px;width:80px;height:20px;overflow:hidden;"><span class="t" style="top:3.23px;font-size:11px;line-height:15px;color:#111;left:2.6px;">30.0</span></div>
<div style="left:877px;top:256px;width:80px;height:20px;border-right:1px solid #c6c6c6;border-bottom:1px solid #c6c6c6;overflow:hidden;"></div>
<div style="left:877px;top:256px;width:80px;height:20px;overflow:hidden;"><span class="t" style="top:3.23px;font-size:11px;line-height:15px;color:#111;left:2.6px;">40.0</span></div>
<div style="left:957px;top:256px;width:23px;height:20px;border-bottom:1px solid #c6c6c6;overflow:hidden;"></div>
<div style="left:957px;top:256px;width:23px;height:20px;overflow:hidden;"><span class="t" style="top:3.23px;font-size:11px;line-height:15px;color:#111;left:2.6px;">50.0</span></div>
<div style="left:557px;top:236px;width:79px;height:19px;background:#fff;"></div>
<div style="left:558.6px;top:240px;width:28.4px;height:12.4px;background:#3d7ea1;"></div>
<span class="t" style="top:239.23px;font-size:11px;line-height:15px;color:#fff;left:559.4px;">700.0</span>
<div style="left:557px;top:253.6px;width:79px;height:1.6px;background:#1f6d8e;"></div>
<div style="left:522px;top:501px;width:458px;height:11px;background:#fff;"></div>
<div style="left:522px;top:501px;width:45px;height:11px;background:#9a9a9a;"></div>
<svg style="left:596px;top:236px;" width="13" height="22" viewBox="0 0 13 22"><path d="M1 1V17.4L4.8 13.8L7.6 20.4L10.2 19.2L7.4 12.8H12.4Z" fill="#fff" stroke="#111" stroke-width="1.1" stroke-linejoin="miter"/></svg>
<div style="left:521px;top:518px;width:460px;height:321px;background:#fff;border:1px solid #8c8c8c;"></div>
<div style="left:522px;top:519px;width:448px;height:24px;background:#c8c8c8;border-bottom:1px solid #959595;"></div>
<div style="left:556.0px;top:519px;width:1px;height:24px;background:#959595;"></div>
<div style="left:636.0px;top:519px;width:1px;height:24px;background:#959595;"></div>
<div style="left:716.0px;top:519px;width:1px;height:24px;background:#959595;"></div>
<div style="left:796.0px;top:519px;width:1px;height:24px;background:#959595;"></div>
<div style="left:876.0px;top:519px;width:1px;height:24px;background:#959595;"></div>
<div style="left:956.0px;top:519px;width:1px;height:24px;background:#959595;"></div>
<span class="t" style="top:524.13px;font-size:11px;line-height:15px;color:#111;left:476.0px;width:400px;text-align:center;">1</span>
<span class="t" style="top:524.13px;font-size:11px;line-height:15px;color:#111;left:556.0px;width:400px;text-align:center;">2</span>
<span class="t" style="top:524.13px;font-size:11px;line-height:15px;color:#111;left:636.0px;width:400px;text-align:center;">3</span>
<span class="t" style="top:524.13px;font-size:11px;line-height:15px;color:#111;left:716.0px;width:400px;text-align:center;">4</span>
<div style="left:522px;top:542.5px;width:35px;height:20px;background:#c8c8c8;border-right:1px solid #959595;border-bottom:1px solid #959595;"></div>
<span class="t" style="top:545.63px;font-size:11px;line-height:15px;color:#111;left:532.2px;">1</span>
<div style="left:557px;top:542.5px;width:80.0px;height:20px;background:#e7e7e7;border-right:1px solid #c6c6c6;border-bottom:1px solid #c6c6c6;overflow:hidden;"></div>
<div style="left:636.5px;top:542.5px;width:80.0px;height:20px;background:#e3e8f4;border-right:1px solid #c6c6c6;border-bottom:1px solid #c6c6c6;overflow:hidden;"><span class="t" style="top:3.23px;font-size:11px;line-height:15px;color:#111;left:3.2px;">X3=0.0</span></div>
<div style="left:716.5px;top:542.5px;width:80.0px;height:20px;background:#e7e7e7;border-right:1px solid #c6c6c6;border-bottom:1px solid #c6c6c6;overflow:hidden;"></div>
<div style="left:796.5px;top:542.5px;width:80.0px;height:20px;background:#e7e7e7;border-right:1px solid #c6c6c6;border-bottom:1px solid #c6c6c6;overflow:hidden;"></div>
<div style="left:876.5px;top:542.5px;width:80.0px;height:20px;background:#e7e7e7;border-right:1px solid #c6c6c6;border-bottom:1px solid #c6c6c6;overflow:hidden;"></div>
<div style="left:956.5px;top:542.5px;width:13px;height:20px;background:#e7e7e7;border-right:1px solid #c6c6c6;border-bottom:1px solid #c6c6c6;overflow:hidden;"></div>
<div style="left:522px;top:562.5px;width:35px;height:20px;background:#c8c8c8;border-right:1px solid #959595;border-bottom:1px solid #959595;"></div>
<span class="t" style="top:565.63px;font-size:11px;line-height:15px;color:#111;left:532.2px;">2</span>
<div style="left:557px;top:562.5px;width:80.0px;height:20px;background:#e7e7e7;border-right:1px solid #c6c6c6;border-bottom:1px solid #c6c6c6;overflow:hidden;"></div>
<div style="left:636.5px;top:562.5px;width:80.0px;height:20px;background:#e3e8f4;border-right:1px solid #c6c6c6;border-bottom:1px solid #c6c6c6;overflow:hidden;"><span class="t" style="top:3.23px;font-size:11px;line-height:15px;color:#111;left:3.2px;">0.5</span></div>
<div style="left:716.5px;top:562.5px;width:80.0px;height:20px;background:#e3e8f4;border-right:1px solid #c6c6c6;border-bottom:1px solid #c6c6c6;overflow:hidden;"><span class="t" style="top:3.23px;font-size:11px;line-height:15px;color:#111;left:3.2px;">0.74283304...</span></div>
<div style="left:796.5px;top:562.5px;width:80.0px;height:20px;background:#e3e8f4;border-right:1px solid #c6c6c6;border-bottom:1px solid #c6c6c6;overflow:hidden;"><span class="t" style="top:3.23px;font-size:11px;line-height:15px;color:#111;left:3.2px;">0.98566608...</span></div>
<div style="left:876.5px;top:562.5px;width:80.0px;height:20px;background:#e3e8f4;border-right:1px solid #c6c6c6;border-bottom:1px solid #c6c6c6;overflow:hidden;"><span class="t" style="top:3.23px;font-size:11px;line-height:15px;color:#111;left:3.2px;">1.22849912...</span></div>
<div style="left:956.5px;top:562.5px;width:13px;height:20px;background:#e3e8f4;border-right:1px solid #c6c6c6;border-bottom:1px solid #c6c6c6;overflow:hidden;"><span class="t" style="top:3.23px;font-size:11px;line-height:15px;color:#111;left:3.2px;">1.</span></div>
<div style="left:522px;top:582.5px;width:35px;height:20px;background:#c8c8c8;border-right:1px solid #959595;border-bottom:1px solid #959595;"></div>
<span class="t" style="top:585.63px;font-size:11px;line-height:15px;color:#111;left:532.2px;">3</span>
<div style="left:557px;top:582.5px;width:80.0px;height:20px;background:#e3e8f4;border-right:1px solid #c6c6c6;border-bottom:1px solid #c6c6c6;overflow:hidden;"><span class="t" style="top:3.23px;font-size:11px;line-height:15px;color:#111;left:3.2px;">700.0</span></div>
<div style="left:636.5px;top:582.5px;width:80.0px;height:20px;background:#fff;border-right:1px solid #c6c6c6;border-bottom:1px solid #c6c6c6;overflow:hidden;"><span class="t" style="top:3.23px;font-size:11px;line-height:15px;color:#111;left:3.2px;">1.31</span></div>
<div style="left:716.5px;top:582.5px;width:80.0px;height:20px;background:#fff;border-right:1px solid #c6c6c6;border-bottom:1px solid #c6c6c6;overflow:hidden;"><span class="t" style="top:3.23px;font-size:11px;line-height:15px;color:#111;left:3.2px;">1.31</span></div>
<div style="left:796.5px;top:582.5px;width:80.0px;height:20px;background:#fff;border-right:1px solid #c6c6c6;border-bottom:1px solid #c6c6c6;overflow:hidden;"><span class="t" style="top:3.23px;font-size:11px;line-height:15px;color:#111;left:3.2px;">1.31</span></div>
<div style="left:876.5px;top:582.5px;width:80.0px;height:20px;background:#fff;border-right:1px solid #c6c6c6;border-bottom:1px solid #c6c6c6;overflow:hidden;"><span class="t" style="top:3.23px;font-size:11px;line-height:15px;color:#111;left:3.2px;">1.31</span></div>
<div style="left:956.5px;top:582.5px;width:13px;height:20px;background:#fff;border-right:1px solid #c6c6c6;border-bottom:1px solid #c6c6c6;overflow:hidden;"><span class="t" style="top:3.23px;font-size:11px;line-height:15px;color:#111;left:3.2px;">1.</span></div>
<div style="left:522px;top:602.5px;width:35px;height:20px;background:#c8c8c8;border-right:1px solid #959595;border-bottom:1px solid #959595;"></div>
<span class="t" style="top:605.63px;font-size:11px;line-height:15px;color:#111;left:532.2px;">4</span>
<div style="left:557px;top:602.5px;width:80.0px;height:20px;background:#e3e8f4;border-right:1px solid #c6c6c6;border-bottom:1px solid #c6c6c6;overflow:hidden;"><span class="t" style="top:3.23px;font-size:11px;line-height:15px;color:#111;left:3.2px;">1000.0</span></div>
<div style="left:636.5px;top:602.5px;width:80.0px;height:20px;background:#e9e9e9;border-right:1px solid #c6c6c6;border-bottom:1px solid #c6c6c6;overflow:hidden;"><span class="t" style="top:3.23px;font-size:11px;line-height:15px;color:#111;left:3.2px;">1.46</span></div>
<div style="left:716.5px;top:602.5px;width:80.0px;height:20px;background:#e9e9e9;border-right:1px solid #c6c6c6;border-bottom:1px solid #c6c6c6;overflow:hidden;"><span class="t" style="top:3.23px;font-size:11px;line-height:15px;color:#111;left:3.2px;">1.46</span></div>
<div style="left:796.5px;top:602.5px;width:80.0px;height:20px;background:#e9e9e9;border-right:1px solid #c6c6c6;border-bottom:1px solid #c6c6c6;overflow:hidden;"><span class="t" style="top:3.23px;font-size:11px;line-height:15px;color:#111;left:3.2px;">1.46</span></div>
<div style="left:876.5px;top:602.5px;width:80.0px;height:20px;background:#e9e9e9;border-right:1px solid #c6c6c6;border-bottom:1px solid #c6c6c6;overflow:hidden;"><span class="t" style="top:3.23px;font-size:11px;line-height:15px;color:#111;left:3.2px;">1.46</span></div>
<div style="left:956.5px;top:602.5px;width:13px;height:20px;background:#e9e9e9;border-right:1px solid #c6c6c6;border-bottom:1px solid #c6c6c6;overflow:hidden;"><span class="t" style="top:3.23px;font-size:11px;line-height:15px;color:#111;left:3.2px;">1.</span></div>
<div style="left:522px;top:622.5px;width:35px;height:20px;background:#c8c8c8;border-right:1px solid #959595;border-bottom:1px solid #959595;"></div>
<span class="t" style="top:625.63px;font-size:11px;line-height:15px;color:#111;left:532.2px;">5</span>
<div style="left:557px;top:622.5px;width:80.0px;height:20px;background:#e3e8f4;border-right:1px solid #c6c6c6;border-bottom:1px solid #c6c6c6;overflow:hidden;"><span class="t" style="top:3.23px;font-size:11px;line-height:15px;color:#111;left:3.2px;">1500.0</span></div>
<div style="left:636.5px;top:622.5px;width:80.0px;height:20px;background:#fff;border-right:1px solid #c6c6c6;border-bottom:1px solid #c6c6c6;overflow:hidden;"><span class="t" style="top:3.23px;font-size:11px;line-height:15px;color:#111;left:3.2px;">1.72</span></div>
<div style="left:716.5px;top:622.5px;width:80.0px;height:20px;background:#fff;border-right:1px solid #c6c6c6;border-bottom:1px solid #c6c6c6;overflow:hidden;"><span class="t" style="top:3.23px;font-size:11px;line-height:15px;color:#111;left:3.2px;">1.72</span></div>
<div style="left:796.5px;top:622.5px;width:80.0px;height:20px;background:#fff;border-right:1px solid #c6c6c6;border-bottom:1px solid #c6c6c6;overflow:hidden;"><span class="t" style="top:3.23px;font-size:11px;line-height:15px;color:#111;left:3.2px;">1.72</span></div>
<div style="left:876.5px;top:622.5px;width:80.0px;height:20px;background:#fff;border-right:1px solid #c6c6c6;border-bottom:1px solid #c6c6c6;overflow:hidden;"><span class="t" style="top:3.23px;font-size:11px;line-height:15px;color:#111;left:3.2px;">1.72</span></div>
<div style="left:956.5px;top:622.5px;width:13px;height:20px;background:#fff;border-right:1px solid #c6c6c6;border-bottom:1px solid #c6c6c6;overflow:hidden;"><span class="t" style="top:3.23px;font-size:11px;line-height:15px;color:#111;left:3.2px;">1.</span></div>
<div style="left:522px;top:642.5px;width:35px;height:20px;background:#c8c8c8;border-right:1px solid #959595;border-bottom:1px solid #959595;"></div>
<span class="t" style="top:645.63px;font-size:11px;line-height:15px;color:#111;left:532.2px;">6</span>
<div style="left:557px;top:642.5px;width:80.0px;height:20px;background:#e3e8f4;border-right:1px solid #c6c6c6;border-bottom:1px solid #c6c6c6;overflow:hidden;"><span class="t" style="top:3.23px;font-size:11px;line-height:15px;color:#111;left:3.2px;">2000.0</span></div>
<div style="left:636.5px;top:642.5px;width:80.0px;height:20px;background:#e9e9e9;border-right:1px solid #c6c6c6;border-bottom:1px solid #c6c6c6;overflow:hidden;"><span class="t" style="top:3.23px;font-size:11px;line-height:15px;color:#111;left:3.2px;">1.98</span></div>
<div style="left:716.5px;top:642.5px;width:80.0px;height:20px;background:#e9e9e9;border-right:1px solid #c6c6c6;border-bottom:1px solid #c6c6c6;overflow:hidden;"><span class="t" style="top:3.23px;font-size:11px;line-height:15px;color:#111;left:3.2px;">1.98</span></div>
<div style="left:796.5px;top:642.5px;width:80.0px;height:20px;background:#e9e9e9;border-right:1px solid #c6c6c6;border-bottom:1px solid #c6c6c6;overflow:hidden;"><span class="t" style="top:3.23px;font-size:11px;line-height:15px;color:#111;left:3.2px;">1.98</span></div>
<div style="left:876.5px;top:642.5px;width:80.0px;height:20px;background:#e9e9e9;border-right:1px solid #c6c6c6;border-bottom:1px solid #c6c6c6;overflow:hidden;"><span class="t" style="top:3.23px;font-size:11px;line-height:15px;color:#111;left:3.2px;">1.98</span></div>
<div style="left:956.5px;top:642.5px;width:13px;height:20px;background:#e9e9e9;border-right:1px solid #c6c6c6;border-bottom:1px solid #c6c6c6;overflow:hidden;"><span class="t" style="top:3.23px;font-size:11px;line-height:15px;color:#111;left:3.2px;">1.</span></div>
<div style="left:522px;top:662.5px;width:35px;height:20px;background:#c8c8c8;border-right:1px solid #959595;border-bottom:1px solid #959595;"></div>
<span class="t" style="top:665.63px;font-size:11px;line-height:15px;color:#111;left:532.2px;">7</span>
<div style="left:557px;top:662.5px;width:80.0px;height:20px;background:#e3e8f4;border-right:1px solid #c6c6c6;border-bottom:1px solid #c6c6c6;overflow:hidden;"><span class="t" style="top:3.23px;font-size:11px;line-height:15px;color:#111;left:3.2px;">2500.0</span></div>
<div style="left:636.5px;top:662.5px;width:80.0px;height:20px;background:#fff;border-right:1px solid #c6c6c6;border-bottom:1px solid #c6c6c6;overflow:hidden;"><span class="t" style="top:3.23px;font-size:11px;line-height:15px;color:#111;left:3.2px;">2.24</span></div>
<div style="left:716.5px;top:662.5px;width:80.0px;height:20px;background:#fff;border-right:1px solid #c6c6c6;border-bottom:1px solid #c6c6c6;overflow:hidden;"><span class="t" style="top:3.23px;font-size:11px;line-height:15px;color:#111;left:3.2px;">2.24</span></div>
<div style="left:796.5px;top:662.5px;width:80.0px;height:20px;background:#fff;border-right:1px solid #c6c6c6;border-bottom:1px solid #c6c6c6;overflow:hidden;"><span class="t" style="top:3.23px;font-size:11px;line-height:15px;color:#111;left:3.2px;">2.24</span></div>
<div style="left:876.5px;top:662.5px;width:80.0px;height:20px;background:#fff;border-right:1px solid #c6c6c6;border-bottom:1px solid #c6c6c6;overflow:hidden;"><span class="t" style="top:3.23px;font-size:11px;line-height:15px;color:#111;left:3.2px;">2.24</span></div>
<div style="left:956.5px;top:662.5px;width:13px;height:20px;background:#fff;border-right:1px solid #c6c6c6;border-bottom:1px solid #c6c6c6;overflow:hidden;"><span class="t" style="top:3.23px;font-size:11px;line-height:15px;color:#111;left:3.2px;">2.</span></div>
<div style="left:522px;top:682.5px;width:35px;height:20px;background:#c8c8c8;border-right:1px solid #959595;border-bottom:1px solid #959595;"></div>
<span class="t" style="top:685.63px;font-size:11px;line-height:15px;color:#111;left:532.2px;">8</span>
<div style="left:557px;top:682.5px;width:80.0px;height:20px;background:#e3e8f4;border-right:1px solid #c6c6c6;border-bottom:1px solid #c6c6c6;overflow:hidden;"><span class="t" style="top:3.23px;font-size:11px;line-height:15px;color:#111;left:3.2px;">3000.0</span></div>
<div style="left:636.5px;top:682.5px;width:80.0px;height:20px;background:#e9e9e9;border-right:1px solid #c6c6c6;border-bottom:1px solid #c6c6c6;overflow:hidden;"><span class="t" style="top:3.23px;font-size:11px;line-height:15px;color:#111;left:3.2px;">2.5</span></div>
<div style="left:716.5px;top:682.5px;width:80.0px;height:20px;background:#e9e9e9;border-right:1px solid #c6c6c6;border-bottom:1px solid #c6c6c6;overflow:hidden;"><span class="t" style="top:3.23px;font-size:11px;line-height:15px;color:#111;left:3.2px;">2.5</span></div>
<div style="left:796.5px;top:682.5px;width:80.0px;height:20px;background:#e9e9e9;border-right:1px solid #c6c6c6;border-bottom:1px solid #c6c6c6;overflow:hidden;"><span class="t" style="top:3.23px;font-size:11px;line-height:15px;color:#111;left:3.2px;">2.5</span></div>
<div style="left:876.5px;top:682.5px;width:80.0px;height:20px;background:#e9e9e9;border-right:1px solid #c6c6c6;border-bottom:1px solid #c6c6c6;overflow:hidden;"><span class="t" style="top:3.23px;font-size:11px;line-height:15px;color:#111;left:3.2px;">2.5</span></div>
<div style="left:956.5px;top:682.5px;width:13px;height:20px;background:#e9e9e9;border-right:1px solid #c6c6c6;border-bottom:1px solid #c6c6c6;overflow:hidden;"><span class="t" style="top:3.23px;font-size:11px;line-height:15px;color:#111;left:3.2px;">2.</span></div>
<div style="left:522px;top:702.5px;width:35px;height:20px;background:#c8c8c8;border-right:1px solid #959595;border-bottom:1px solid #959595;"></div>
<span class="t" style="top:705.63px;font-size:11px;line-height:15px;color:#111;left:532.2px;">9</span>
<div style="left:557px;top:702.5px;width:80.0px;height:20px;background:#e3e8f4;border-right:1px solid #c6c6c6;border-bottom:1px solid #c6c6c6;overflow:hidden;"><span class="t" style="top:3.23px;font-size:11px;line-height:15px;color:#111;left:3.2px;">3500.0</span></div>
<div style="left:636.5px;top:702.5px;width:80.0px;height:20px;background:#fff;border-right:1px solid #c6c6c6;border-bottom:1px solid #c6c6c6;overflow:hidden;"><span class="t" style="top:3.23px;font-size:11px;line-height:15px;color:#111;left:3.2px;">2.76</span></div>
<div style="left:716.5px;top:702.5px;width:80.0px;height:20px;background:#fff;border-right:1px solid #c6c6c6;border-bottom:1px solid #c6c6c6;overflow:hidden;"><span class="t" style="top:3.23px;font-size:11px;line-height:15px;color:#111;left:3.2px;">2.76</span></div>
<div style="left:796.5px;top:702.5px;width:80.0px;height:20px;background:#fff;border-right:1px solid #c6c6c6;border-bottom:1px solid #c6c6c6;overflow:hidden;"><span class="t" style="top:3.23px;font-size:11px;line-height:15px;color:#111;left:3.2px;">2.76</span></div>
<div style="left:876.5px;top:702.5px;width:80.0px;height:20px;background:#fff;border-right:1px solid #c6c6c6;border-bottom:1px solid #c6c6c6;overflow:hidden;"><span class="t" style="top:3.23px;font-size:11px;line-height:15px;color:#111;left:3.2px;">2.76</span></div>
<div style="left:956.5px;top:702.5px;width:13px;height:20px;background:#fff;border-right:1px solid #c6c6c6;border-bottom:1px solid #c6c6c6;overflow:hidden;"><span class="t" style="top:3.23px;font-size:11px;line-height:15px;color:#111;left:3.2px;">2.</span></div>
<div style="left:522px;top:722.5px;width:35px;height:20px;background:#c8c8c8;border-right:1px solid #959595;border-bottom:1px solid #959595;"></div>
<span class="t" style="top:725.63px;font-size:11px;line-height:15px;color:#111;left:532.2px;">10</span>
<div style="left:557px;top:722.5px;width:80.0px;height:20px;background:#e3e8f4;border-right:1px solid #c6c6c6;border-bottom:1px solid #c6c6c6;overflow:hidden;"><span class="t" style="top:3.23px;font-size:11px;line-height:15px;color:#111;left:3.2px;">3750.0</span></div>
<div style="left:636.5px;top:722.5px;width:80.0px;height:20px;background:#e9e9e9;border-right:1px solid #c6c6c6;border-bottom:1px solid #c6c6c6;overflow:hidden;"><span class="t" style="top:3.23px;font-size:11px;line-height:15px;color:#111;left:3.2px;">2.89</span></div>
<div style="left:716.5px;top:722.5px;width:80.0px;height:20px;background:#e9e9e9;border-right:1px solid #c6c6c6;border-bottom:1px solid #c6c6c6;overflow:hidden;"><span class="t" style="top:3.23px;font-size:11px;line-height:15px;color:#111;left:3.2px;">2.89</span></div>
<div style="left:796.5px;top:722.5px;width:80.0px;height:20px;background:#e9e9e9;border-right:1px solid #c6c6c6;border-bottom:1px solid #c6c6c6;overflow:hidden;"><span class="t" style="top:3.23px;font-size:11px;line-height:15px;color:#111;left:3.2px;">2.89</span></div>
<div style="left:876.5px;top:722.5px;width:80.0px;height:20px;background:#e9e9e9;border-right:1px solid #c6c6c6;border-bottom:1px solid #c6c6c6;overflow:hidden;"><span class="t" style="top:3.23px;font-size:11px;line-height:15px;color:#111;left:3.2px;">2.89</span></div>
<div style="left:956.5px;top:722.5px;width:13px;height:20px;background:#e9e9e9;border-right:1px solid #c6c6c6;border-bottom:1px solid #c6c6c6;overflow:hidden;"><span class="t" style="top:3.23px;font-size:11px;line-height:15px;color:#111;left:3.2px;">2.</span></div>
<div style="left:522px;top:742.5px;width:35px;height:20px;background:#c8c8c8;border-right:1px solid #959595;border-bottom:1px solid #959595;"></div>
<span class="t" style="top:745.63px;font-size:11px;line-height:15px;color:#111;left:532.2px;">11</span>
<div style="left:557px;top:742.5px;width:80.0px;height:20px;background:#e3e8f4;border-right:1px solid #c6c6c6;border-bottom:1px solid #c6c6c6;overflow:hidden;"><span class="t" style="top:3.23px;font-size:11px;line-height:15px;color:#111;left:3.2px;">4000.0</span></div>
<div style="left:636.5px;top:742.5px;width:80.0px;height:20px;background:#fff;border-right:1px solid #c6c6c6;border-bottom:1px solid #c6c6c6;overflow:hidden;"><span class="t" style="top:3.23px;font-size:11px;line-height:15px;color:#111;left:3.2px;">3.02</span></div>
<div style="left:716.5px;top:742.5px;width:80.0px;height:20px;background:#fff;border-right:1px solid #c6c6c6;border-bottom:1px solid #c6c6c6;overflow:hidden;"><span class="t" style="top:3.23px;font-size:11px;line-height:15px;color:#111;left:3.2px;">3.02</span></div>
<div style="left:796.5px;top:742.5px;width:80.0px;height:20px;background:#fff;border-right:1px solid #c6c6c6;border-bottom:1px solid #c6c6c6;overflow:hidden;"><span class="t" style="top:3.23px;font-size:11px;line-height:15px;color:#111;left:3.2px;">3.02</span></div>
<div style="left:876.5px;top:742.5px;width:80.0px;height:20px;background:#fff;border-right:1px solid #c6c6c6;border-bottom:1px solid #c6c6c6;overflow:hidden;"><span class="t" style="top:3.23px;font-size:11px;line-height:15px;color:#111;left:3.2px;">3.02</span></div>
<div style="left:956.5px;top:742.5px;width:13px;height:20px;background:#fff;border-right:1px solid #c6c6c6;border-bottom:1px solid #c6c6c6;overflow:hidden;"><span class="t" style="top:3.23px;font-size:11px;line-height:15px;color:#111;left:3.2px;">3.</span></div>
<div style="left:522px;top:762.5px;width:35px;height:20px;background:#c8c8c8;border-right:1px solid #959595;border-bottom:1px solid #959595;"></div>
<span class="t" style="top:765.63px;font-size:11px;line-height:15px;color:#111;left:532.2px;">12</span>
<div style="left:557px;top:762.5px;width:80.0px;height:20px;background:#e3e8f4;border-right:1px solid #c6c6c6;border-bottom:1px solid #c6c6c6;overflow:hidden;"><span class="t" style="top:3.23px;font-size:11px;line-height:15px;color:#111;left:3.2px;">4500.0</span></div>
<div style="left:636.5px;top:762.5px;width:80.0px;height:20px;background:#e9e9e9;border-right:1px solid #c6c6c6;border-bottom:1px solid #c6c6c6;overflow:hidden;"><span class="t" style="top:3.23px;font-size:11px;line-height:15px;color:#111;left:3.2px;">3.28</span></div>
<div style="left:716.5px;top:762.5px;width:80.0px;height:20px;background:#e9e9e9;border-right:1px solid #c6c6c6;border-bottom:1px solid #c6c6c6;overflow:hidden;"><span class="t" style="top:3.23px;font-size:11px;line-height:15px;color:#111;left:3.2px;">3.28</span></div>
<div style="left:796.5px;top:762.5px;width:80.0px;height:20px;background:#e9e9e9;border-right:1px solid #c6c6c6;border-bottom:1px solid #c6c6c6;overflow:hidden;"><span class="t" style="top:3.23px;font-size:11px;line-height:15px;color:#111;left:3.2px;">3.28</span></div>
<div style="left:876.5px;top:762.5px;width:80.0px;height:20px;background:#e9e9e9;border-right:1px solid #c6c6c6;border-bottom:1px solid #c6c6c6;overflow:hidden;"><span class="t" style="top:3.23px;font-size:11px;line-height:15px;color:#111;left:3.2px;">3.28</span></div>
<div style="left:956.5px;top:762.5px;width:13px;height:20px;background:#e9e9e9;border-right:1px solid #c6c6c6;border-bottom:1px solid #c6c6c6;overflow:hidden;"><span class="t" style="top:3.23px;font-size:11px;line-height:15px;color:#111;left:3.2px;">3.</span></div>
<div style="left:522px;top:782.5px;width:35px;height:20px;background:#c8c8c8;border-right:1px solid #959595;border-bottom:1px solid #959595;"></div>
<span class="t" style="top:785.63px;font-size:11px;line-height:15px;color:#111;left:532.2px;">13</span>
<div style="left:557px;top:782.5px;width:80.0px;height:20px;background:#e3e8f4;border-right:1px solid #c6c6c6;border-bottom:1px solid #c6c6c6;overflow:hidden;"><span class="t" style="top:3.23px;font-size:11px;line-height:15px;color:#111;left:3.2px;">5000.0</span></div>
<div style="left:636.5px;top:782.5px;width:80.0px;height:20px;background:#fff;border-right:1px solid #c6c6c6;border-bottom:1px solid #c6c6c6;overflow:hidden;"><span class="t" style="top:3.23px;font-size:11px;line-height:15px;color:#111;left:3.2px;">3.54</span></div>
<div style="left:716.5px;top:782.5px;width:80.0px;height:20px;background:#fff;border-right:1px solid #c6c6c6;border-bottom:1px solid #c6c6c6;overflow:hidden;"><span class="t" style="top:3.23px;font-size:11px;line-height:15px;color:#111;left:3.2px;">3.54</span></div>
<div style="left:796.5px;top:782.5px;width:80.0px;height:20px;background:#fff;border-right:1px solid #c6c6c6;border-bottom:1px solid #c6c6c6;overflow:hidden;"><span class="t" style="top:3.23px;font-size:11px;line-height:15px;color:#111;left:3.2px;">3.54</span></div>
<div style="left:876.5px;top:782.5px;width:80.0px;height:20px;background:#fff;border-right:1px solid #c6c6c6;border-bottom:1px solid #c6c6c6;overflow:hidden;"><span class="t" style="top:3.23px;font-size:11px;line-height:15px;color:#111;left:3.2px;">3.54</span></div>
<div style="left:956.5px;top:782.5px;width:13px;height:20px;background:#fff;border-right:1px solid #c6c6c6;border-bottom:1px solid #c6c6c6;overflow:hidden;"><span class="t" style="top:3.23px;font-size:11px;line-height:15px;color:#111;left:3.2px;">3.</span></div>
<div style="left:522px;top:802.5px;width:35px;height:20px;background:#c8c8c8;border-right:1px solid #959595;border-bottom:1px solid #959595;"></div>
<span class="t" style="top:805.63px;font-size:11px;line-height:15px;color:#111;left:532.2px;">14</span>
<div style="left:557px;top:802.5px;width:80.0px;height:20px;background:#e3e8f4;border-right:1px solid #c6c6c6;border-bottom:1px solid #c6c6c6;overflow:hidden;"><span class="t" style="top:3.23px;font-size:11px;line-height:15px;color:#111;left:3.2px;">5500.0</span></div>
<div style="left:636.5px;top:802.5px;width:80.0px;height:20px;background:#e9e9e9;border-right:1px solid #c6c6c6;border-bottom:1px solid #c6c6c6;overflow:hidden;"><span class="t" style="top:3.23px;font-size:11px;line-height:15px;color:#111;left:3.2px;">3.8</span></div>
<div style="left:716.5px;top:802.5px;width:80.0px;height:20px;background:#e9e9e9;border-right:1px solid #c6c6c6;border-bottom:1px solid #c6c6c6;overflow:hidden;"><span class="t" style="top:3.23px;font-size:11px;line-height:15px;color:#111;left:3.2px;">3.8</span></div>
<div style="left:796.5px;top:802.5px;width:80.0px;height:20px;background:#e9e9e9;border-right:1px solid #c6c6c6;border-bottom:1px solid #c6c6c6;overflow:hidden;"><span class="t" style="top:3.23px;font-size:11px;line-height:15px;color:#111;left:3.2px;">3.8</span></div>
<div style="left:876.5px;top:802.5px;width:80.0px;height:20px;background:#e9e9e9;border-right:1px solid #c6c6c6;border-bottom:1px solid #c6c6c6;overflow:hidden;"><span class="t" style="top:3.23px;font-size:11px;line-height:15px;color:#111;left:3.2px;">3.8</span></div>
<div style="left:956.5px;top:802.5px;width:13px;height:20px;background:#e9e9e9;border-right:1px solid #c6c6c6;border-bottom:1px solid #c6c6c6;overflow:hidden;"><span class="t" style="top:3.23px;font-size:11px;line-height:15px;color:#111;left:3.2px;">3.</span></div>
<div style="left:522px;top:822.5px;width:35px;height:5px;background:#c8c8c8;border-right:1px solid #959595;border-bottom:1px solid #959595;"></div>
<div style="left:557px;top:822.5px;width:80.0px;height:5px;background:#e3e8f4;border-right:1px solid #c6c6c6;overflow:hidden;"></div>
<div style="left:636.5px;top:822.5px;width:80.0px;height:5px;background:#fff;border-right:1px solid #c6c6c6;overflow:hidden;"></div>
<div style="left:716.5px;top:822.5px;width:80.0px;height:5px;background:#fff;border-right:1px solid #c6c6c6;overflow:hidden;"></div>
<div style="left:796.5px;top:822.5px;width:80.0px;height:5px;background:#fff;border-right:1px solid #c6c6c6;overflow:hidden;"></div>
<div style="left:876.5px;top:822.5px;width:80.0px;height:5px;background:#fff;border-right:1px solid #c6c6c6;overflow:hidden;"></div>
<div style="left:956.5px;top:822.5px;width:13px;height:5px;background:#fff;border-right:1px solid #c6c6c6;overflow:hidden;"></div>
<span class="t" style="top:568.93px;font-size:11px;line-height:15px;color:#111;left:560.4px;">X2</span>
<span class="t" style="top:562.93px;font-size:11px;line-height:15px;color:#111;left:618px;">X1</span>
<div style="left:970px;top:519px;width:10px;height:308px;background:#f4f4f4;"></div>
<div style="left:970px;top:519px;width:10px;height:269px;background:#9a9a9a;"></div>
<div style="left:522px;top:827px;width:458px;height:11px;background:#fff;"></div>
<div style="left:522px;top:827px;width:43px;height:11px;background:#9a9a9a;"></div>
<div style="left:970px;top:827px;width:10px;height:11px;background:#f4f4f4;"></div>
<div style="left:521.2px;top:845.3px;width:79.6px;height:23.4px;background:#dedede;border:1px solid #666;"></div>
<div style="left:607.2px;top:845.3px;width:79.6px;height:23.4px;background:#dedede;border:1px solid #666;"></div>
<svg style="left:535px;top:849px;" width="16" height="17" viewBox="0 0 16 17"><rect x="0" y="0.4" width="12.8" height="15.4" fill="#4b4b4b"/><rect x="1.5" y="4.40" width="2.5" height="2.4" fill="#f4f4f4"/><rect x="5.4" y="4.40" width="2.5" height="2.4" fill="#f4f4f4"/><rect x="9.3" y="4.40" width="2.5" height="2.4" fill="#f4f4f4"/><rect x="1.5" y="8.15" width="2.5" height="2.4" fill="#f4f4f4"/><rect x="5.4" y="8.15" width="2.5" height="2.4" fill="#f4f4f4"/><rect x="9.3" y="8.15" width="2.5" height="2.4" fill="#f4f4f4"/><rect x="1.5" y="11.90" width="2.5" height="2.4" fill="#f4f4f4"/><rect x="5.4" y="11.90" width="2.5" height="2.4" fill="#f4f4f4"/><rect x="9.3" y="11.90" width="2.5" height="2.4" fill="#f4f4f4"/><path d="M5.6 5.2C6.4 2.4 8.6 0.9 11 0.9V-0.7L14.8 2.1L11 4.9V3.3C9.2 3.3 7.4 3.8 5.6 5.2Z" fill="#4b4b4b" stroke="#dedede" stroke-width="0.9" stroke-linejoin="round"/></svg>
<svg style="left:619.8px;top:849px;" width="16" height="17" viewBox="0 0 16 17"><rect x="0" y="0.4" width="12.8" height="15.4" fill="#4b4b4b"/><rect x="1.5" y="4.40" width="2.5" height="2.4" fill="#f4f4f4"/><rect x="5.4" y="4.40" width="2.5" height="2.4" fill="#f4f4f4"/><rect x="9.3" y="4.40" width="2.5" height="2.4" fill="#f4f4f4"/><rect x="1.5" y="8.15" width="2.5" height="2.4" fill="#f4f4f4"/><rect x="5.4" y="8.15" width="2.5" height="2.4" fill="#f4f4f4"/><rect x="9.3" y="8.15" width="2.5" height="2.4" fill="#f4f4f4"/><rect x="1.5" y="11.90" width="2.5" height="2.4" fill="#f4f4f4"/><rect x="5.4" y="11.90" width="2.5" height="2.4" fill="#f4f4f4"/><rect x="9.3" y="11.90" width="2.5" height="2.4" fill="#f4f4f4"/><path d="M14.4 -0.4C11 0 9.2 1.6 8.6 4.2L6.8 3L7.8 7.8L12.2 6.2L10.4 5.2C10.8 3.2 12 1.4 14.4 -0.4Z" fill="#4b4b4b" stroke="#dedede" stroke-width="0.9" stroke-linejoin="round"/></svg>
<span class="t" style="top:849.52px;font-size:12px;line-height:17px;color:#111;letter-spacing:-0.315px;left:554.2px;">Export</span>
<span class="t" style="top:849.52px;font-size:12px;line-height:17px;color:#111;letter-spacing:0.397px;left:638.6px;">Import</span>
<div style="left:985.9px;top:191px;width:412.7px;height:31px;background:#fff;border-right:1px solid #b5b5b5;"></div>
<svg style="left:0;top:0" width="1920" height="1038" viewBox="0 0 1920 1038"><defs></defs><g transform="translate(0,0)"><g transform="translate(992.6,197.8)"><rect x="0" y="0" width="12.4" height="3.6" fill="#1f6f93"/><path d="M0.7 3V11.8H6M0.7 6.4H12M0.7 9.2H6M4.4 3.6V11.8M8.4 3.6V7" fill="none" stroke="#1f6f93" stroke-width="1.3"/><path d="M6.8 7.4H13.6L14.8 8.6V15.4H6.8Z" fill="#fff" stroke="#1f6f93" stroke-width="1.3"/><rect x="8.8" y="7.6" width="3.6" height="2.6" fill="#1f6f93"/></g><path d="M1016.5 191V221.5" stroke="#b9b9b9" stroke-width="1"/><path d="M1027.3 198.8V211.8L1030.4 209L1032.8 213.6L1034.8 212.6L1032.6 208.2H1037.4Z" fill="#fff" stroke="#1f6f93" stroke-width="1.3" stroke-linejoin="round"/><rect x="1046.5" y="193.5" width="26.4" height="26" fill="#c9c9c9" stroke="#9b9b9b" stroke-width="1"/><g fill="none" stroke="#1f6f93"><circle cx="1057.6" cy="204.8" r="5.5" stroke-width="2"/><path d="M1061.9 209.3L1066 213.4" stroke-width="2.8" stroke-linecap="round"/><path d="M1055.2 208L1057.6 201.4L1060 208M1056 206H1059.2" stroke-width="0.9"/><path d="M1053.2 209.6C1055 211.8 1058 212.4 1060 211.4" stroke-width="0.9"/></g><g fill="none" stroke="#1f6f93"><circle cx="1084.2" cy="204.8" r="5.5" stroke-width="2"/><path d="M1088.5 209.3L1092.4 213.2" stroke-width="2.8" stroke-linecap="round"/><path d="M1081.2 201.8L1083.2 203.8M1087.2 201.8L1085.2 203.8M1081.2 207.8L1083.2 205.8M1087.2 207.8L1085.2 205.8" stroke-width="1.7"/></g><g fill="none" stroke="#8c8c8c"><circle cx="1111.6" cy="205" r="5.5" stroke-width="2"/><path d="M1115.9 209.5L1119.6 213.2" stroke-width="2.8" stroke-linecap="round"/><path d="M1109.4 206.2C1110 202.6 1114.4 200.8 1118.4 201.8" stroke-width="1.3"/><path d="M1108.2 204.4L1109.4 207.2L1112 205.8" stroke-width="1"/></g><path d="M1129.5 196V216.5" stroke="#c4c4c4" stroke-width="1"/><g fill="none" stroke="#8c8c8c" stroke-width="1.7"><circle cx="1146.2" cy="206" r="3.3"/><path d="M1146.2 198.2V202.6M1146.2 209.4V213.8"/><circle cx="1173" cy="206" r="3.3"/><path d="M1173 198.2V202.6M1173 209.4V213.8M1165.4 206H1169.6M1176.4 206H1180.6"/><circle cx="1195.4" cy="202.6" r="3.2"/><circle cx="1202.6" cy="208.8" r="3.2"/><path d="M1195.4 205.8V213.4M1202.6 198.2V205.6M1192 213.4H1203.6"/></g></g></svg>
<div style="left:986.3px;top:221.3px;width:411px;height:586.2px;background:#fff;border:1px solid #5a5a5a;"></div>
<svg style="left:0;top:0" width="1920" height="1038" viewBox="0 0 1920 1038"><defs><linearGradient id="ds" gradientUnits="userSpaceOnUse" x1="1228.5" y1="360.8" x2="1296.6" y2="650.5"><stop offset="0.000" stop-color="#d84404"/><stop offset="0.035" stop-color="#da4a05"/><stop offset="0.090" stop-color="#dc6404"/><stop offset="0.140" stop-color="#e09000"/><stop offset="0.185" stop-color="#e6c400"/><stop offset="0.218" stop-color="#e8e000"/><stop offset="0.270" stop-color="#d0dc0c"/><stop offset="0.350" stop-color="#9cd428"/><stop offset="0.450" stop-color="#62cc52"/><stop offset="0.550" stop-color="#2cc688"/><stop offset="0.650" stop-color="#0cc2b4"/><stop offset="0.739" stop-color="#00bcd8"/><stop offset="0.790" stop-color="#00a0dc"/><stop offset="0.860" stop-color="#0074dc"/><stop offset="0.930" stop-color="#004ce0"/><stop offset="1.000" stop-color="#0034e4"/></linearGradient><linearGradient id="dc" gradientUnits="userSpaceOnUse" x1="1372.5" y1="307.0" x2="1372.5" y2="723.0"><stop offset="0.000" stop-color="#ff0000"/><stop offset="0.070" stop-color="#ee2a04"/><stop offset="0.143" stop-color="#dc5408"/><stop offset="0.215" stop-color="#e09400"/><stop offset="0.286" stop-color="#e8d000"/><stop offset="0.315" stop-color="#e6e000"/><stop offset="0.360" stop-color="#c8dc10"/><stop offset="0.429" stop-color="#94d42c"/><stop offset="0.500" stop-color="#5ccc58"/><stop offset="0.571" stop-color="#28c68c"/><stop offset="0.645" stop-color="#08c2b8"/><stop offset="0.714" stop-color="#00bcd8"/><stop offset="0.786" stop-color="#0092dc"/><stop offset="0.857" stop-color="#0062dc"/><stop offset="0.930" stop-color="#0030e8"/><stop offset="1.000" stop-color="#0000f6"/></linearGradient></defs><path d="M1084.7 352.8L1236.8 306.2M1084.7 359.5L1236.8 312.8M1084.7 366.2L1236.8 319.4M1084.7 372.8L1236.8 326.0M1084.7 379.5L1236.8 332.6M1084.6 386.2L1236.8 339.2M1084.6 392.9L1236.8 345.8M1084.6 399.6L1236.8 352.4M1084.6 406.2L1236.8 359.0M1084.6 412.9L1236.9 365.5M1084.6 419.6L1236.9 372.1M1084.6 426.3L1236.9 378.7M1084.6 433.0L1236.9 385.3M1084.6 439.6L1236.9 391.9M1084.5 446.3L1236.9 398.5M1084.5 453.0L1236.9 405.1M1084.5 459.7L1236.9 411.7M1084.5 466.4L1236.9 418.3M1084.5 473.0L1236.9 424.9M1084.5 479.7L1236.9 431.5M1084.5 486.4L1236.9 438.1M1084.5 493.1L1236.9 444.7M1084.4 499.8L1236.9 451.3M1084.4 506.4L1236.9 457.9M1084.4 513.1L1236.9 464.5M1084.4 519.8L1236.9 471.1M1084.4 526.5L1236.9 477.7M1084.4 533.2L1237.0 484.2M1084.4 539.8L1237.0 490.8M1084.4 546.5L1237.0 497.4M1084.4 553.2L1237.0 504.0M1084.3 559.9L1237.0 510.6M1084.3 566.6L1237.0 517.2M1084.3 573.2L1237.0 523.8M1084.3 579.9L1237.0 530.4M1084.3 586.6L1237.0 537.0M1084.7 352.8L1084.3 586.6M1095.6 349.5L1095.2 583.1M1106.4 346.1L1106.1 579.5M1117.3 342.8L1117.0 576.0M1128.2 339.5L1127.9 572.4M1139.0 336.2L1138.8 568.9M1149.9 332.8L1149.7 565.3M1160.8 329.5L1160.7 561.8M1171.6 326.2L1171.6 558.3M1182.5 322.8L1182.5 554.7M1193.3 319.5L1193.4 551.2M1204.2 316.2L1204.3 547.6M1215.1 312.9L1215.2 544.1M1225.9 309.5L1226.1 540.5M1236.8 306.2L1237.0 537.0M1236.8 306.2L1290.2 444.6M1236.8 312.8L1290.2 451.3M1236.8 319.4L1290.2 457.9M1236.8 326.0L1290.2 464.6M1236.8 332.6L1290.2 471.3M1236.8 339.2L1290.2 478.0M1236.8 345.8L1290.2 484.6M1236.8 352.4L1290.2 491.3M1236.8 359.0L1290.2 498.0M1236.9 365.5L1290.3 504.6M1236.9 372.1L1290.3 511.3M1236.9 378.7L1290.3 518.0M1236.9 385.3L1290.3 524.7M1236.9 391.9L1290.3 531.3M1236.9 398.5L1290.3 538.0M1236.9 405.1L1290.3 544.7M1236.9 411.7L1290.3 551.3M1236.9 418.3L1290.3 558.0M1236.9 424.9L1290.3 564.7M1236.9 431.5L1290.3 571.4M1236.9 438.1L1290.3 578.0M1236.9 444.7L1290.3 584.7M1236.9 451.3L1290.3 591.4M1236.9 457.9L1290.3 598.0M1236.9 464.5L1290.3 604.7M1236.9 471.1L1290.3 611.4M1236.9 477.7L1290.3 618.1M1237.0 484.2L1290.4 624.7M1237.0 490.8L1290.4 631.4M1237.0 497.4L1290.4 638.1M1237.0 504.0L1290.4 644.7M1237.0 510.6L1290.4 651.4M1237.0 517.2L1290.4 658.1M1237.0 523.8L1290.4 664.8M1237.0 530.4L1290.4 671.4M1237.0 537.0L1290.4 678.1M1236.8 306.2L1237.0 537.0M1240.6 316.1L1240.8 547.1M1244.4 326.0L1244.6 557.2M1248.2 335.9L1248.4 567.2M1252.1 345.7L1252.3 577.3M1255.9 355.6L1256.1 587.4M1259.7 365.5L1259.9 597.5M1263.5 375.4L1263.7 607.5M1267.3 385.3L1267.5 617.6M1271.1 395.2L1271.3 627.7M1274.9 405.1L1275.1 637.8M1278.8 414.9L1279.0 647.9M1282.6 424.8L1282.8 657.9M1286.4 434.7L1286.6 668.0M1290.2 444.6L1290.4 678.1M1084.3 586.6L1237.0 537.0M1088.1 596.4L1240.8 547.1M1092.0 606.1L1244.6 557.2M1095.8 615.9L1248.4 567.2M1099.7 625.6L1252.3 577.3M1103.5 635.4L1256.1 587.4M1107.4 645.1L1259.9 597.5M1111.2 654.9L1263.7 607.5M1115.0 664.6L1267.5 617.6M1118.9 674.4L1271.3 627.7M1122.7 684.1L1275.1 637.8M1126.6 693.9L1279.0 647.9M1130.4 703.6L1282.8 657.9M1134.3 713.4L1286.6 668.0M1138.1 723.1L1290.4 678.1M1084.3 586.6L1138.1 723.1M1095.2 583.1L1149.0 719.9M1106.1 579.5L1159.9 716.7M1117.0 576.0L1170.7 713.5M1127.9 572.4L1181.6 710.2M1138.8 568.9L1192.5 707.0M1149.7 565.3L1203.4 703.8M1160.7 561.8L1214.2 700.6M1171.6 558.3L1225.1 697.4M1182.5 554.7L1236.0 694.2M1193.4 551.2L1246.9 691.0M1204.3 547.6L1257.8 687.7M1215.2 544.1L1268.6 684.5M1226.1 540.5L1279.5 681.3M1237.0 537.0L1290.4 678.1" fill="none" stroke="#b4b4b4" stroke-width="0.8" stroke-dasharray="1 2.2"/><path d="M1084.7 352.8L1236.8 306.2M1236.8 306.2L1290.2 444.6M1290.2 444.6L1290.4 678.1M1236.8 306.2L1237.0 537.0M1084.3 586.6L1237.0 537.0M1237.0 537.0L1290.4 678.1" fill="none" stroke="#a6a6a6" stroke-width="1"/><path d="M1097.3 401.7L1228.5 360.8L1267.3 648.0L1137.2 687.9Z" fill="url(#ds)"/><path d="M1084.7 352.8L1084.3 586.6M1084.3 586.6L1138.1 723.1M1138.1 723.1L1290.4 678.1M1084.7 352.8h-8.6M1084.7 359.5h-4.6M1084.7 366.2h-4.6M1084.7 372.8h-4.6M1084.7 379.5h-4.6M1084.6 386.2h-8.6M1084.6 392.9h-4.6M1084.6 399.6h-4.6M1084.6 406.2h-4.6M1084.6 412.9h-4.6M1084.6 419.6h-8.6M1084.6 426.3h-4.6M1084.6 433.0h-4.6M1084.6 439.6h-4.6M1084.5 446.3h-4.6M1084.5 453.0h-8.6M1084.5 459.7h-4.6M1084.5 466.4h-4.6M1084.5 473.0h-4.6M1084.5 479.7h-4.6M1084.5 486.4h-8.6M1084.5 493.1h-4.6M1084.4 499.8h-4.6M1084.4 506.4h-4.6M1084.4 513.1h-4.6M1084.4 519.8h-8.6M1084.4 526.5h-4.6M1084.4 533.2h-4.6M1084.4 539.8h-4.6M1084.4 546.5h-4.6M1084.4 553.2h-8.6M1084.3 559.9h-4.6M1084.3 566.6h-4.6M1084.3 573.2h-4.6M1084.3 579.9h-4.6M1084.3 586.6h-8.6M1138.1 723.1L1130.2 724.5M1130.4 703.6L1126.0 704.4M1122.7 684.1L1114.8 685.5M1115.0 664.6L1110.6 665.4M1107.4 645.1L1099.5 646.5M1099.7 625.6L1095.2 626.4M1092.0 606.1L1084.1 607.5M1084.3 586.6L1079.9 587.4M1138.1 723.1L1140.3 730.8M1149.0 719.9L1150.2 724.2M1159.9 716.7L1162.1 724.4M1170.7 713.5L1172.0 717.8M1181.6 710.2L1183.9 717.9M1192.5 707.0L1193.8 711.3M1203.4 703.8L1205.6 711.5M1214.2 700.6L1215.5 704.9M1225.1 697.4L1227.4 705.1M1236.0 694.2L1237.3 698.5M1246.9 691.0L1249.1 698.6M1257.8 687.7L1259.0 692.1M1268.6 684.5L1270.9 692.2M1279.5 681.3L1280.8 685.6M1290.4 678.1L1292.6 685.8" fill="none" stroke="#111" stroke-width="1.05"/><text x="1071" y="357.2" text-anchor="end" font-family='"Liberation Sans",sans-serif' font-weight="bold" font-size="11.7" fill="#0c0c14">4.5</text><text x="1071" y="390.6" text-anchor="end" font-family='"Liberation Sans",sans-serif' font-weight="bold" font-size="11.7" fill="#0c0c14">4.0</text><text x="1071" y="424.0" text-anchor="end" font-family='"Liberation Sans",sans-serif' font-weight="bold" font-size="11.7" fill="#0c0c14">3.5</text><text x="1071" y="457.4" text-anchor="end" font-family='"Liberation Sans",sans-serif' font-weight="bold" font-size="11.7" fill="#0c0c14">3.0</text><text x="1071" y="490.8" text-anchor="end" font-family='"Liberation Sans",sans-serif' font-weight="bold" font-size="11.7" fill="#0c0c14">2.5</text><text x="1071" y="524.2" text-anchor="end" font-family='"Liberation Sans",sans-serif' font-weight="bold" font-size="11.7" fill="#0c0c14">2.0</text><text x="1071" y="557.6" text-anchor="end" font-family='"Liberation Sans",sans-serif' font-weight="bold" font-size="11.7" fill="#0c0c14">1.5</text><text x="1071" y="591.0" text-anchor="end" font-family='"Liberation Sans",sans-serif' font-weight="bold" font-size="11.7" fill="#0c0c14">1.0</text><text x="1140" y="744.0" text-anchor="middle" font-family='"Liberation Sans",sans-serif' font-weight="bold" font-size="11.7" fill="#0c0c14">0</text><text x="1162.3" y="737.4" text-anchor="middle" font-family='"Liberation Sans",sans-serif' font-weight="bold" font-size="11.7" fill="#0c0c14">2</text><text x="1184.3" y="731.4" text-anchor="middle" font-family='"Liberation Sans",sans-serif' font-weight="bold" font-size="11.7" fill="#0c0c14">4</text><text x="1206.2" y="724.0" text-anchor="middle" font-family='"Liberation Sans",sans-serif' font-weight="bold" font-size="11.7" fill="#0c0c14">6</text><text x="1227.8" y="717.4" text-anchor="middle" font-family='"Liberation Sans",sans-serif' font-weight="bold" font-size="11.7" fill="#0c0c14">8</text><text x="1249" y="710.4" text-anchor="middle" font-family='"Liberation Sans",sans-serif' font-weight="bold" font-size="11.7" fill="#0c0c14">10</text><text x="1271" y="703.8" text-anchor="middle" font-family='"Liberation Sans",sans-serif' font-weight="bold" font-size="11.7" fill="#0c0c14">12</text><text x="1293" y="696.4" text-anchor="middle" font-family='"Liberation Sans",sans-serif' font-weight="bold" font-size="11.7" fill="#0c0c14">14</text><text x="1076.3" y="613.4" text-anchor="middle" font-family='"Liberation Sans",sans-serif' font-weight="bold" font-size="11.7" fill="#0c0c14">6</text><text x="1091.6" y="652.8" text-anchor="middle" font-family='"Liberation Sans",sans-serif' font-weight="bold" font-size="11.7" fill="#0c0c14">4</text><text x="1106.3" y="692.8" text-anchor="middle" font-family='"Liberation Sans",sans-serif' font-weight="bold" font-size="11.7" fill="#0c0c14">2</text><text x="1121" y="731.9" text-anchor="middle" font-family='"Liberation Sans",sans-serif' font-weight="bold" font-size="11.7" fill="#0c0c14">0</text><text x="1071" y="339.5" text-anchor="middle" font-family='"Liberation Sans",sans-serif' font-weight="bold" font-size="11.6" fill="#0c0c14">[bar]</text><text x="1032.3" y="474.9" text-anchor="middle" font-family='"Liberation Sans",sans-serif' font-weight="bold" font-size="11" fill="#0c0c14">FMEP</text><text x="1038.7" y="543.6" text-anchor="middle" font-family='"Liberation Sans",sans-serif' font-weight="bold" font-size="12.2" fill="#0c0c14">[rev/min]</text><text x="1060.4" y="574.7" text-anchor="middle" font-family='"Liberation Sans",sans-serif' font-weight="bold" font-size="11.7" fill="#0c0c14">x10</text><text x="1060.5" y="671.2" text-anchor="middle" font-family='"Liberation Sans",sans-serif' font-weight="bold" font-size="11.6" fill="#0c0c14">speed</text><text x="1226.2" y="743.8000000000001" text-anchor="middle" font-family='"Liberation Sans",sans-serif' font-weight="bold" font-size="11" fill="#0c0c14">BMEP</text><text x="1321.3" y="677.2" text-anchor="middle" font-family='"Liberation Sans",sans-serif' font-weight="bold" font-size="11.6" fill="#0c0c14">[bar]</text><rect x="1372.5" y="307" width="12.099999999999909" height="416" fill="url(#dc)"/><path d="M1372.5 307V723M1372.5 307.0h-6.4M1372.5 318.9h-3.4M1372.5 330.8h-3.4M1372.5 342.7h-3.4M1372.5 354.5h-3.4M1372.5 366.4h-6.4M1372.5 378.3h-3.4M1372.5 390.2h-3.4M1372.5 402.1h-3.4M1372.5 414.0h-3.4M1372.5 425.9h-6.4M1372.5 437.7h-3.4M1372.5 449.6h-3.4M1372.5 461.5h-3.4M1372.5 473.4h-3.4M1372.5 485.3h-6.4M1372.5 497.2h-3.4M1372.5 509.1h-3.4M1372.5 520.9h-3.4M1372.5 532.8h-3.4M1372.5 544.7h-6.4M1372.5 556.6h-3.4M1372.5 568.5h-3.4M1372.5 580.4h-3.4M1372.5 592.3h-3.4M1372.5 604.1h-6.4M1372.5 616.0h-3.4M1372.5 627.9h-3.4M1372.5 639.8h-3.4M1372.5 651.7h-3.4M1372.5 663.6h-6.4M1372.5 675.5h-3.4M1372.5 687.3h-3.4M1372.5 699.2h-3.4M1372.5 711.1h-3.4M1372.5 723.0h-6.4" fill="none" stroke="#111" stroke-width="1.1"/><text x="1364.6" y="312.3" text-anchor="end" font-family='"Liberation Sans",sans-serif' font-weight="bold" font-size="11.7" fill="#0c0c14">4.5</text><text x="1364.6" y="371.7" text-anchor="end" font-family='"Liberation Sans",sans-serif' font-weight="bold" font-size="11.7" fill="#0c0c14">4.0</text><text x="1364.6" y="431.2" text-anchor="end" font-family='"Liberation Sans",sans-serif' font-weight="bold" font-size="11.7" fill="#0c0c14">3.5</text><text x="1364.6" y="490.6" text-anchor="end" font-family='"Liberation Sans",sans-serif' font-weight="bold" font-size="11.7" fill="#0c0c14">3.0</text><text x="1364.6" y="550.0" text-anchor="end" font-family='"Liberation Sans",sans-serif' font-weight="bold" font-size="11.7" fill="#0c0c14">2.5</text><text x="1364.6" y="609.4" text-anchor="end" font-family='"Liberation Sans",sans-serif' font-weight="bold" font-size="11.7" fill="#0c0c14">2.0</text><text x="1364.6" y="668.9" text-anchor="end" font-family='"Liberation Sans",sans-serif' font-weight="bold" font-size="11.7" fill="#0c0c14">1.5</text><text x="1364.6" y="728.3" text-anchor="end" font-family='"Liberation Sans",sans-serif' font-weight="bold" font-size="11.7" fill="#0c0c14">1.0</text><text x="1071.4" y="567.6" font-family='"Liberation Sans",sans-serif' font-weight="bold" font-size="8.5" fill="#0c0c14">3</text></svg>
<span class="t" style="top:819.92px;font-size:12px;line-height:17px;color:#111;letter-spacing:0.024px;left:986.2px;">oil temperature =</span>
<span class="t" style="top:819.92px;font-size:12px;line-height:17px;color:#111;left:1083.6px;">0</span>
<div style="left:1101px;top:821px;width:297px;height:1px;background:#b4b4b4;"></div>
<div style="left:1101px;top:822px;width:297px;height:1px;background:#fdfdfd;"></div>
<svg style="left:1095.6px;top:814.6px;" width="10" height="18" viewBox="0 0 10 18"><path d="M1.6 0.6H7.8Q8.8 0.6 8.8 1.6V11.6L4.7 15.8L0.6 11.6V1.6Q0.6 0.6 1.6 0.6Z" fill="url(#thg)" stroke="#8a8a8a" stroke-width="1"/><defs><linearGradient id="thg" x1="0" y1="0" x2="0" y2="1"><stop offset="0" stop-color="#f6f6f6"/><stop offset="0.55" stop-color="#e2e2e2"/><stop offset="1" stop-color="#c4c4c4"/></linearGradient></defs></svg>
<div style="left:1100.6px;top:833px;width:1px;height:5px;background:#555;"></div>
<div style="left:1233px;top:845.2px;width:79.8px;height:22.6px;background:#dedede;border:1px solid #2c7ea8;box-shadow:inset 0 0 0 1px #b9dcee;"></div>
<div style="left:1319px;top:845.2px;width:79.9px;height:22.6px;background:#dedede;border:1px solid #686868;"></div>
<span class="t" style="top:848.72px;font-size:12px;line-height:17px;color:#111;left:1073.2px;width:400px;text-align:center;">OK</span>
<span class="t" style="top:848.72px;font-size:12px;line-height:17px;color:#111;letter-spacing:-0.360px;left:1341.2px;">Cancel</span>
</body></html>
